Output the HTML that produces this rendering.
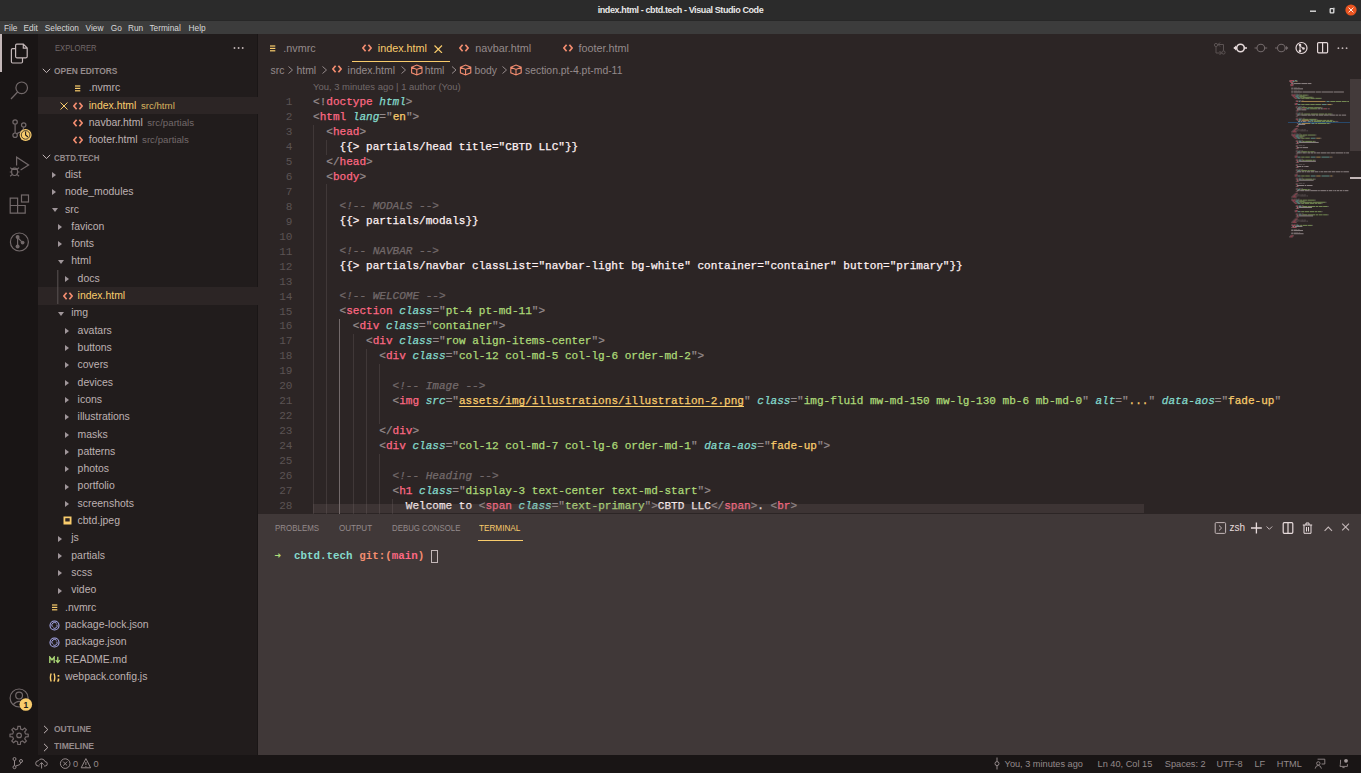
<!DOCTYPE html>
<html><head><meta charset="utf-8"><title>index.html - cbtd.tech - Visual Studio Code</title>
<style>
*{margin:0;padding:0;box-sizing:border-box}
html,body{width:1361px;height:773px;overflow:hidden;background:#2c2525;font-family:"Liberation Sans",sans-serif}
.abs{position:absolute}
#title{position:absolute;left:0;top:0;width:1361px;height:21px;background:#2b2b2b}
#title .t{position:absolute;left:0;width:1361px;top:5px;padding-left:0;text-align:center;color:#e8e8e8;font-weight:bold;font-size:9px;letter-spacing:-0.4px}
#menu{position:absolute;left:0;top:21px;width:1361px;height:13px;background:#3c3c3c}
#menu span{position:absolute;top:1.5px;color:#d8d8d8;font-size:8.3px}
#act{position:absolute;left:0;top:34px;width:38px;height:721px;background:#191515}
#side{position:absolute;left:38px;top:34px;width:220px;height:721px;background:#211c1c}
#editor{position:absolute;left:258px;top:34px;width:1103px;height:480px;background:#2c2525;overflow:hidden}
#panel{position:absolute;left:258px;top:514px;width:1103px;height:241px;background:#403838}
#status{position:absolute;left:0;top:755px;width:1361px;height:18px;background:#191515}
.ln{position:absolute;left:258px;width:34.5px;height:15px;margin-top:0.4px;text-align:right;color:#5b5353;font-family:"Liberation Mono",monospace;font-size:11.06px;line-height:15px}
.cl{position:absolute;left:313px;height:15px;white-space:pre;-webkit-text-stroke:0.25px currentColor;color:#fff1f3;font-family:"Liberation Mono",monospace;font-size:11.06px;line-height:15px}
.ig{position:absolute;width:1px;height:15px;background:#403838}
.ga{background:#72696a}
.p{color:#948a8b}.t{color:#fd6883}.a{color:#85dacc;font-style:italic}.s{color:#f9cc6c}.k{color:#adda78}.c{color:#72696a;font-style:italic}
.u{color:#f9cc6c;text-decoration:underline;text-underline-offset:1.5px}
.row{position:absolute;left:38px;width:220px;height:17.31px;line-height:17.31px;font-size:10.45px;color:#bdb1b2;white-space:nowrap}
.row .tw{position:absolute;top:6px;width:0;height:0;border-top:3px solid transparent;border-bottom:3px solid transparent;border-left:4.5px solid #a0969a}
.row .tw.open{top:7.5px;border-left:3px solid transparent;border-right:3px solid transparent;border-top:4.5px solid #a0969a;border-bottom:0}
.row .lb{position:absolute;top:-0.15px}
.sel{background:#2c2525}
.hdr{font-weight:bold;font-size:9.4px;color:#948a8b}
.tab{position:absolute;top:34px;height:28px;font-size:10.8px;line-height:28px;color:#948a8b;white-space:nowrap}
.bc{position:absolute;top:62.5px;font-size:10.4px;line-height:15px;color:#948a8b;white-space:nowrap}
.ptab{position:absolute;top:522.2px;font-size:9.6px;color:#948a8b;white-space:nowrap}
.term{font-family:"Liberation Mono",monospace;font-weight:bold;font-size:10.85px;line-height:14px;white-space:pre}
.stx{position:absolute;top:759px;font-size:9.2px;color:#948a8b;white-space:nowrap}

</style></head><body>
<div id="title"><div class="t">index.html - cbtd.tech - Visual Studio Code</div>
<svg class="abs" style="left:1308px;top:7px" width="10" height="8"><rect x="2" y="3.5" width="6" height="1.4" fill="#ddd"/></svg>
<svg class="abs" style="left:1327px;top:6px" width="10" height="10"><rect x="3.2" y="2.7" width="3.6" height="4.2" rx="0.6" fill="none" stroke="#e0e0e0" stroke-width="1.3"/><path d="M6.2 2 H7.6 V3.4" stroke="#aaa" stroke-width="0.7" fill="none"/></svg>
<svg class="abs" style="left:1343.8px;top:3.2px" width="14" height="14"><circle cx="7" cy="7" r="5.6" fill="#e95420"/><path d="M4.6 4.6 L9.4 9.4 M9.4 4.6 L4.6 9.4" stroke="#fff" stroke-width="0.9"/></svg>
</div>
<div class="abs" style="left:0;top:20px;width:1361px;height:1px;background:#272727"></div>
<div id="menu">
<span style="left:4px">File</span><span style="left:23.5px">Edit</span><span style="left:44.8px">Selection</span><span style="left:85.6px">View</span><span style="left:110.8px">Go</span><span style="left:128px">Run</span><span style="left:149.4px">Terminal</span><span style="left:188.6px">Help</span>
</div>
<div id="act"></div>
<div id="side"></div>
<div id="editor"></div>
<div id="panel"></div>
<div id="status"></div>
<div class="abs" style="left:257px;top:34px;width:1px;height:721px;background:#1a1616"></div>

<!-- activity bar -->
<div class="abs" style="left:0;top:34px;width:2px;height:38px;background:#c3b7b8"></div>
<svg class="abs" style="left:0;top:34px" width="38" height="721" viewBox="0 34 38 721">
 <g fill="none" stroke="#c3b7b8" stroke-width="1.2">
  <path d="M15.5 48.6 H12.6 Q11.4 48.6 11.4 49.8 V61.8 Q11.4 63 12.6 63 H21.3 Q22.5 63 22.5 61.8 V57.9"/>
  <path d="M16.8 44.2 H23.3 L27.2 48.1 V56.6 Q27.2 57.8 26 57.8 H16.8 Q15.6 57.8 15.6 56.6 V45.4 Q15.6 44.2 16.8 44.2 Z M23.3 44.4 V48.1 H27"/>
 </g>
 <g fill="none" stroke="#72696a" stroke-width="1.2">
  <circle cx="21.7" cy="87.8" r="5.8"/><path d="M17.6 92 L11 99"/>
  <circle cx="15.1" cy="122" r="2.2"/><circle cx="23.7" cy="125" r="2.2"/><circle cx="15.1" cy="135.2" r="2.2"/>
  <path d="M15.1 124.2 V133 M23.7 127.2 Q23.7 131 16.8 133.6"/>
  <path d="M16.6 165.6 V157.2 L28.6 164.9 L20.6 169.9"/>
  <ellipse cx="14.6" cy="171.8" rx="3" ry="3.7"/><path d="M11.8 169.3 H17.4 M10.2 167.6 L11.9 169 M19 167.6 L17.3 169 M9.8 172 H11.6 M17.6 172 H19.4 M10.2 176.2 L12 174.6 M19 176.2 L17.2 174.6"/>
  <path d="M10.2 205.5 H17.6 V213.2 H10.2 Z M17.6 205.5 V198.2 H10.2 V213.2 M17.6 205.5 H25.2 V213.2 H17.6"/>
  <rect x="21.5" y="195" width="7" height="7"/>
  <circle cx="19.4" cy="242" r="9"/>
  <circle cx="19.1" cy="698" r="9"/><circle cx="19.1" cy="695.6" r="3.4"/><path d="M13 704.8 Q19.1 697.8 25.2 704.8"/>
 </g>
 <g fill="#72696a">
  <circle cx="17.6" cy="237" r="2"/><circle cx="17.6" cy="246.4" r="2"/><circle cx="22.6" cy="242.6" r="1.9"/>
 </g>
 <path d="M17.6 237 V246.4 M17.6 237.5 L22.6 242.6" stroke="#72696a" stroke-width="1.2" fill="none"/>
 <circle cx="25.6" cy="134.9" r="6" fill="#f9cc6c"/>
 <path d="M25.6 131.5 V135 L28 137" stroke="#211c1c" stroke-width="1.1" fill="none"/>
 <circle cx="25.6" cy="134.9" r="4.3" stroke="#211c1c" stroke-width="0.8" fill="none"/>
 <circle cx="25.8" cy="704.5" r="6.3" fill="#f9cc6c"/>
 <text x="25.8" y="707.6" text-anchor="middle" font-family="Liberation Sans" font-weight="bold" font-size="8.5" fill="#211c1c">1</text>
 <g transform="translate(19.1 735.4)" fill="none" stroke="#72696a" stroke-width="1.2">
  <path d="M6.42 -1.54 L9.12 -1.22 L9.12 1.22 L6.42 1.54 L5.63 3.45 L7.31 5.58 L5.58 7.31 L3.45 5.63 L1.54 6.42 L1.22 9.12 L-1.22 9.12 L-1.54 6.42 L-3.45 5.63 L-5.58 7.31 L-7.31 5.58 L-5.63 3.45 L-6.42 1.54 L-9.12 1.22 L-9.12 -1.22 L-6.42 -1.54 L-5.63 -3.45 L-7.31 -5.58 L-5.58 -7.31 L-3.45 -5.63 L-1.54 -6.42 L-1.22 -9.12 L1.22 -9.12 L1.54 -6.42 L3.45 -5.63 L5.58 -7.31 L7.31 -5.58 L5.63 -3.45 Z"/>
  <circle cx="0" cy="0" r="2.3"/>
 </g>
</svg>

<!-- sidebar header -->
<div class="abs" style="left:54.6px;top:42.6px;color:#72696a"><span style="display:inline-block;vertical-align:top;white-space:nowrap;font-size:9.2px;transform:scaleX(0.8302);transform-origin:0 0">EXPLORER</span></div>
<svg class="abs" style="left:232px;top:44px" width="14" height="8"><g fill="#c3b7b8"><circle cx="2.5" cy="4" r="0.95"/><circle cx="6.6" cy="4" r="0.95"/><circle cx="10.7" cy="4" r="0.95"/></g></svg>
<div class="row" style="top:62.20px"><svg class="abs" style="left:4px;top:5.5px" width="9" height="6" viewBox="0 0 9 6"><path d="M0.8 0.8 L4.5 4.6 L8.2 0.8" fill="none" stroke="#c3b7b8" stroke-width="1"/></svg><span class="lb hdr" style="left:16px"><span style="display:inline-block;vertical-align:top;white-space:nowrap;font-weight:bold;font-size:9.4px;transform:scaleX(0.8961);transform-origin:0 0">OPEN EDITORS</span></span></div>
<div class="row" style="top:79.51px"><svg class="abs" style="left:37.0px;top:5.4px" width="7" height="7" viewBox="0 0 7 7"><rect x="0" y="0.4" width="5.3" height="1.2" fill="#f9cc6c"/><rect x="0" y="2.8" width="5.3" height="1.2" fill="#f9cc6c"/><rect x="0" y="5.2" width="5.3" height="1.2" fill="#f9cc6c"/></svg><span class="lb" style="left:50.8px">.nvmrc</span></div>
<div class="row sel" style="top:96.82px"><svg class="abs" style="left:21.5px;top:5px" width="8" height="8" viewBox="0 0 8 8"><path d="M0.5 0.5L7.5 7.5M7.5 0.5L0.5 7.5" stroke="#f9cc6c" stroke-width="1"/></svg><svg class="abs" style="left:35.0px;top:5.0px" width="10" height="8" viewBox="0 0 10 8"><path d="M3.6 0.8 L0.9 4 L3.6 7.2 M6.4 0.8 L9.1 4 L6.4 7.2" fill="none" stroke="#f38d70" stroke-width="1.7"/></svg><span class="lb" style="left:50.8px;color:#f9cc6c">index.html&nbsp;<span style="color:#d9b25e;font-size:9.7px;margin-left:1.6px">src/html</span></span></div>
<div class="row" style="top:114.13px"><svg class="abs" style="left:35.0px;top:5.0px" width="10" height="8" viewBox="0 0 10 8"><path d="M3.6 0.8 L0.9 4 L3.6 7.2 M6.4 0.8 L9.1 4 L6.4 7.2" fill="none" stroke="#f38d70" stroke-width="1.7"/></svg><span class="lb" style="left:50.8px;color:#bdb1b2">navbar.html&nbsp;<span style="color:#72696a;font-size:9.7px;margin-left:1.6px">src/partials</span></span></div>
<div class="row" style="top:131.44px"><svg class="abs" style="left:35.0px;top:5.0px" width="10" height="8" viewBox="0 0 10 8"><path d="M3.6 0.8 L0.9 4 L3.6 7.2 M6.4 0.8 L9.1 4 L6.4 7.2" fill="none" stroke="#f38d70" stroke-width="1.7"/></svg><span class="lb" style="left:50.8px;color:#bdb1b2">footer.html&nbsp;<span style="color:#72696a;font-size:9.7px;margin-left:1.6px">src/partials</span></span></div>
<div class="row" style="top:148.75px"><svg class="abs" style="left:4px;top:5.5px" width="9" height="6" viewBox="0 0 9 6"><path d="M0.8 0.8 L4.5 4.6 L8.2 0.8" fill="none" stroke="#c3b7b8" stroke-width="1"/></svg><span class="lb hdr" style="left:16px"><span style="display:inline-block;vertical-align:top;white-space:nowrap;font-weight:bold;font-size:9.4px;transform:scaleX(0.8378);transform-origin:0 0">CBTD.TECH</span></span></div>
<div class="row" style="top:166.06px"><span class="tw" style="left:14.0px"></span><span class="lb" style="left:27.0px">dist</span></div>
<div class="row" style="top:183.37px"><span class="tw" style="left:14.0px"></span><span class="lb" style="left:27.0px">node_modules</span></div>
<div class="row" style="top:200.68px"><span class="tw open" style="left:14.0px"></span><span class="lb" style="left:27.0px">src</span></div>
<div class="row" style="top:217.99px"><span class="tw" style="left:20.3px"></span><span class="lb" style="left:33.3px">favicon</span></div>
<div class="row" style="top:235.30px"><span class="tw" style="left:20.3px"></span><span class="lb" style="left:33.3px">fonts</span></div>
<div class="row" style="top:252.61px"><span class="tw open" style="left:20.3px"></span><span class="lb" style="left:33.3px">html</span></div>
<div class="row" style="top:269.92px"><span class="tw" style="left:26.6px"></span><span class="lb" style="left:39.6px">docs</span></div>
<div class="row sel" style="top:287.23px"><svg class="abs" style="left:24.6px;top:5.0px" width="10" height="8" viewBox="0 0 10 8"><path d="M3.6 0.8 L0.9 4 L3.6 7.2 M6.4 0.8 L9.1 4 L6.4 7.2" fill="none" stroke="#f38d70" stroke-width="1.7"/></svg><span class="lb" style="left:39.6px;color:#f9cc6c">index.html</span></div>
<div class="row" style="top:304.54px"><span class="tw open" style="left:20.3px"></span><span class="lb" style="left:33.3px">img</span></div>
<div class="row" style="top:321.85px"><span class="tw" style="left:26.6px"></span><span class="lb" style="left:39.6px">avatars</span></div>
<div class="row" style="top:339.16px"><span class="tw" style="left:26.6px"></span><span class="lb" style="left:39.6px">buttons</span></div>
<div class="row" style="top:356.47px"><span class="tw" style="left:26.6px"></span><span class="lb" style="left:39.6px">covers</span></div>
<div class="row" style="top:373.78px"><span class="tw" style="left:26.6px"></span><span class="lb" style="left:39.6px">devices</span></div>
<div class="row" style="top:391.09px"><span class="tw" style="left:26.6px"></span><span class="lb" style="left:39.6px">icons</span></div>
<div class="row" style="top:408.40px"><span class="tw" style="left:26.6px"></span><span class="lb" style="left:39.6px">illustrations</span></div>
<div class="row" style="top:425.71px"><span class="tw" style="left:26.6px"></span><span class="lb" style="left:39.6px">masks</span></div>
<div class="row" style="top:443.02px"><span class="tw" style="left:26.6px"></span><span class="lb" style="left:39.6px">patterns</span></div>
<div class="row" style="top:460.33px"><span class="tw" style="left:26.6px"></span><span class="lb" style="left:39.6px">photos</span></div>
<div class="row" style="top:477.64px"><span class="tw" style="left:26.6px"></span><span class="lb" style="left:39.6px">portfolio</span></div>
<div class="row" style="top:494.95px"><span class="tw" style="left:26.6px"></span><span class="lb" style="left:39.6px">screenshots</span></div>
<div class="row" style="top:512.26px"><svg class="abs" style="left:24.6px;top:4.2px" width="9" height="9" viewBox="0 0 9 9"><rect x="0.5" y="0.5" width="8" height="8" fill="#f9cc6c"/><rect x="2.3" y="2.2" width="4.4" height="3.3" fill="#2c2525"/></svg><span class="lb" style="left:39.6px;color:#bdb1b2">cbtd.jpeg</span></div>
<div class="row" style="top:529.57px"><span class="tw" style="left:20.3px"></span><span class="lb" style="left:33.3px">js</span></div>
<div class="row" style="top:546.88px"><span class="tw" style="left:20.3px"></span><span class="lb" style="left:33.3px">partials</span></div>
<div class="row" style="top:564.19px"><span class="tw" style="left:20.3px"></span><span class="lb" style="left:33.3px">scss</span></div>
<div class="row" style="top:581.50px"><span class="tw" style="left:20.3px"></span><span class="lb" style="left:33.3px">video</span></div>
<div class="row" style="top:598.81px"><svg class="abs" style="left:13.5px;top:5.4px" width="7" height="7" viewBox="0 0 7 7"><rect x="0" y="0.4" width="5.3" height="1.2" fill="#f9cc6c"/><rect x="0" y="2.8" width="5.3" height="1.2" fill="#f9cc6c"/><rect x="0" y="5.2" width="5.3" height="1.2" fill="#f9cc6c"/></svg><span class="lb" style="left:27.0px;color:#bdb1b2">.nvmrc</span></div>
<div class="row" style="top:616.12px"><svg class="abs" style="left:11.0px;top:3.7px" width="11" height="11" viewBox="0 0 11 11"><circle cx="5.5" cy="5.5" r="4.5" fill="none" stroke="#a8a9eb" stroke-width="1.1"/><path d="M3.4 6.8 A2.5 2.5 0 0 1 7.6 3.4 M7.8 4.6 A2.5 2.5 0 0 1 4.2 7.9" fill="none" stroke="#a8a9eb" stroke-width="0.95"/></svg><span class="lb" style="left:27.0px;color:#bdb1b2">package-lock.json</span></div>
<div class="row" style="top:633.43px"><svg class="abs" style="left:11.0px;top:3.7px" width="11" height="11" viewBox="0 0 11 11"><circle cx="5.5" cy="5.5" r="4.5" fill="none" stroke="#a8a9eb" stroke-width="1.1"/><path d="M3.4 6.8 A2.5 2.5 0 0 1 7.6 3.4 M7.8 4.6 A2.5 2.5 0 0 1 4.2 7.9" fill="none" stroke="#a8a9eb" stroke-width="0.95"/></svg><span class="lb" style="left:27.0px;color:#bdb1b2">package.json</span></div>
<div class="row" style="top:650.74px"><svg class="abs" style="left:10.5px;top:5.0px" width="12" height="8" viewBox="0 0 12 8"><path d="M0.8 7V1 L3 4 L5.2 1 V7" fill="none" stroke="#adda78" stroke-width="1.3"/><path d="M8.8 0.8V6 M6.8 4.2 L8.8 6.6 L10.8 4.2" fill="none" stroke="#adda78" stroke-width="1.3"/></svg><span class="lb" style="left:27.0px;color:#bdb1b2">README.md</span></div>
<div class="row" style="top:668.05px"><svg class="abs" style="left:10.5px;top:4.5px" width="13" height="9" viewBox="0 0 13 9"><path d="M2.2 0.6 Q0.6 4.5 2.2 8.4 M5 0.6 Q6.6 4.5 5 8.4" fill="none" stroke="#f9cc6c" stroke-width="1.4"/><rect x="8.6" y="2" width="1.7" height="1.7" fill="#f9cc6c"/><path d="M9.5 5.6 V7.2 L8.6 8.6" fill="none" stroke="#f9cc6c" stroke-width="1.6"/></svg><span class="lb" style="left:27.0px;color:#bdb1b2">webpack.config.js</span></div>
<svg class="abs" style="left:57px;top:270px" width="2" height="34"><rect x="0.3" y="0" width="1" height="34" fill="#5b5353"/></svg>
<div class="row" style="top:720.2px"><svg class="abs" style="left:5px;top:5px" width="6" height="9" viewBox="0 0 6 9"><path d="M1 0.8 L4.8 4.5 L1 8.2" fill="none" stroke="#c3b7b8" stroke-width="1"/></svg><span class="lb hdr" style="left:16.4px"><span style="display:inline-block;vertical-align:top;white-space:nowrap;font-weight:bold;font-size:9.4px;transform:scaleX(0.9042);transform-origin:0 0">OUTLINE</span></span></div>
<div class="row" style="top:737.6px"><svg class="abs" style="left:5px;top:5px" width="6" height="9" viewBox="0 0 6 9"><path d="M1 0.8 L4.8 4.5 L1 8.2" fill="none" stroke="#c3b7b8" stroke-width="1"/></svg><span class="lb hdr" style="left:16.4px"><span style="display:inline-block;vertical-align:top;white-space:nowrap;font-weight:bold;font-size:9.4px;transform:scaleX(0.9164);transform-origin:0 0">TIMELINE</span></span></div>

<!-- tabs -->
<div id="tabs">
 <svg class="abs" style="left:269.5px;top:45.2px" width="7" height="7" viewBox="0 0 7 7"><rect x="0" y="0.4" width="5.3" height="1.2" fill="#f9cc6c"/><rect x="0" y="2.8" width="5.3" height="1.2" fill="#f9cc6c"/><rect x="0" y="5.2" width="5.3" height="1.2" fill="#f9cc6c"/></svg>
 <div class="tab" style="left:283.3px">.nvmrc</div>
 <svg class="abs" style="left:361.6px;top:44.4px" width="10" height="8" viewBox="0 0 10 8"><path d="M3.6 0.8 L0.9 4 L3.6 7.2 M6.4 0.8 L9.1 4 L6.4 7.2" fill="none" stroke="#f38d70" stroke-width="1.7"/></svg>
 <div class="tab" style="left:377.8px;color:#f9cc6c">index.html</div>
 <svg class="abs" style="left:434px;top:44.5px" width="8.5" height="8.5" viewBox="0 0 8 8"><path d="M0.5 0.5L7.5 7.5M7.5 0.5L0.5 7.5" stroke="#f9cc6c" stroke-width="1.1"/></svg>
 <div class="abs" style="left:352px;top:60.6px;width:97.5px;height:1.5px;background:#f9cc6c"></div>
 <svg class="abs" style="left:459.4px;top:44.4px" width="10" height="8" viewBox="0 0 10 8"><path d="M3.6 0.8 L0.9 4 L3.6 7.2 M6.4 0.8 L9.1 4 L6.4 7.2" fill="none" stroke="#f38d70" stroke-width="1.7"/></svg>
 <div class="tab" style="left:475.3px">navbar.html</div>
 <svg class="abs" style="left:562.8px;top:44.4px" width="10" height="8" viewBox="0 0 10 8"><path d="M3.6 0.8 L0.9 4 L3.6 7.2 M6.4 0.8 L9.1 4 L6.4 7.2" fill="none" stroke="#f38d70" stroke-width="1.7"/></svg>
 <div class="tab" style="left:578.5px">footer.html</div>
</div>
<!-- editor actions -->
<svg class="abs" style="left:1205px;top:38px" width="150" height="20" viewBox="1205 38 150 20">
 <g fill="none" stroke="#5b5353" stroke-width="1">
  <circle cx="1216" cy="45" r="1.6"/><circle cx="1223.5" cy="52.5" r="1.6"/>
  <path d="M1216 46.8 V53 H1221.5 M1223.5 50.8 V44.5 H1218 M1219.5 51 L1221.5 53 L1219.5 55 M1220 42.5 L1218 44.5 L1220 46.5"/>
 </g>
 <g fill="none" stroke="#e6dadb" stroke-width="1.6"><circle cx="1240.5" cy="48" r="3.8"/><path d="M1236.7 48 H1233.8 M1244.3 48 H1247"/></g>
 <path d="M1236 45.6 L1233.6 48 L1236 50.4" fill="#e6dadb"/>
 <g fill="none" stroke="#72696a" stroke-width="1.1"><circle cx="1260.8" cy="48" r="3.8"/><path d="M1257 48 H1254.5 M1264.6 48 H1267.2"/>
 <circle cx="1281.3" cy="48" r="3.8"/><path d="M1277.5 48 H1275 M1285.1 48 H1287.5"/></g>
 <path d="M1286 45.8 L1288.3 48 L1286 50.2" fill="#72696a"/>
 <g fill="none" stroke="#e6dadb" stroke-width="1.2"><circle cx="1301.5" cy="48" r="5.5"/></g>
 <g fill="#e6dadb"><circle cx="1300" cy="45" r="1.3"/><circle cx="1300" cy="51" r="1.3"/><circle cx="1303.5" cy="48.5" r="1.3"/></g>
 <path d="M1300 45 V51 M1300 46 L1303.5 48.5" stroke="#e6dadb" stroke-width="1" fill="none"/>
 <rect x="1317.6" y="42.6" width="10" height="10.2" rx="1" fill="none" stroke="#e6dadb" stroke-width="1.2"/>
 <path d="M1322.6 42.6 V52.8" stroke="#e6dadb" stroke-width="1.2"/>
 <g fill="#c3b7b8"><circle cx="1338.4" cy="48.2" r="0.9"/><circle cx="1342.5" cy="48.2" r="0.9"/><circle cx="1346.6" cy="48.2" r="0.9"/></g>
</svg>

<!-- breadcrumbs -->
<div class="bc" style="left:270.5px">src</div>
<div class="bc" style="left:296.5px">html</div>
<svg class="abs" style="left:332.0px;top:65.4px" width="10" height="8" viewBox="0 0 10 8"><path d="M3.6 0.8 L0.9 4 L3.6 7.2 M6.4 0.8 L9.1 4 L6.4 7.2" fill="none" stroke="#f38d70" stroke-width="1.7"/></svg>
<div class="bc" style="left:347.6px">index.html</div>
<div class="bc" style="left:424.8px">html</div>
<div class="bc" style="left:474.5px">body</div>
<div class="bc" style="left:525px">section.pt-4.pt-md-11</div>
<svg class="abs" style="left:280px;top:62px" width="400" height="16" viewBox="280 62 400 16">
 <g fill="none" stroke="#948a8b" stroke-width="1"><path d="M288.5 66.5 L292.5 70 L288.5 73.5 M322.5 66.5 L326.5 70 L322.5 73.5 M401.5 66.5 L405.5 70 L401.5 73.5 M452 66.5 L456 70 L452 73.5 M502.5 66.5 L506.5 70 L502.5 73.5"/></g>
 <g fill="none" stroke="#f38d70" stroke-width="1.1">
  <path d="M411.6 67.2 L416.8 65 L422 67.2 V72.8 L416.8 75 L411.6 72.8 Z M411.6 67.2 L416.8 69.4 L422 67.2 M416.8 69.4 V75"/>
  <path d="M460.4 67.2 L465.6 65 L470.8 67.2 V72.8 L465.6 75 L460.4 72.8 Z M460.4 67.2 L465.6 69.4 L470.8 67.2 M465.6 69.4 V75"/>
  <path d="M510.8 67.2 L516 65 L521.2 67.2 V72.8 L516 75 L510.8 72.8 Z M510.8 67.2 L516 69.4 L521.2 67.2 M516 69.4 V75"/>
 </g>
</svg>
<div class="abs" style="left:313px;top:81px;font-size:9.45px;color:#72696a;white-space:nowrap">You, 3 minutes ago | 1 author (You)</div>

<div id="code" class="abs" style="left:258px;top:79px;width:1023px;height:435px;overflow:hidden">
<div class="abs" style="left:-258px;top:-79px;width:1361px;height:600px">
<div class="ln" style="top:94.70px">1</div>
<div class="cl" style="top:94.70px"><span class="p">&lt;</span><span class="p">!</span><span class="t">doctype</span> <span class="a">html</span><span class="p">&gt;</span></div>
<div class="ln" style="top:109.66px">2</div>
<div class="cl" style="top:109.66px"><span class="p">&lt;</span><span class="t">html</span> <span class="a">lang</span><span class="p">=</span><span class="p">"</span><span class="s">en</span><span class="p">"</span><span class="p">&gt;</span></div>
<div class="ln" style="top:124.62px">3</div>
<div class="ig" style="left:313.0px;top:124.62px"></div>
<div class="cl" style="top:124.62px">  <span class="p">&lt;</span><span class="t">head</span><span class="p">&gt;</span></div>
<div class="ln" style="top:139.58px">4</div>
<div class="ig" style="left:313.0px;top:139.58px"></div>
<div class="ig" style="left:326.0px;top:139.58px"></div>
<div class="cl" style="top:139.58px">    {{&gt; partials/head title="CBTD LLC"}}</div>
<div class="ln" style="top:154.54px">5</div>
<div class="ig" style="left:313.0px;top:154.54px"></div>
<div class="cl" style="top:154.54px">  <span class="p">&lt;/</span><span class="t">head</span><span class="p">&gt;</span></div>
<div class="ln" style="top:169.50px">6</div>
<div class="ig" style="left:313.0px;top:169.50px"></div>
<div class="cl" style="top:169.50px">  <span class="p">&lt;</span><span class="t">body</span><span class="p">&gt;</span></div>
<div class="ln" style="top:184.46px">7</div>
<div class="ig" style="left:313.0px;top:184.46px"></div>
<div class="ig" style="left:326.0px;top:184.46px"></div>
<div class="cl" style="top:184.46px"></div>
<div class="ln" style="top:199.42px">8</div>
<div class="ig" style="left:313.0px;top:199.42px"></div>
<div class="ig" style="left:326.0px;top:199.42px"></div>
<div class="cl" style="top:199.42px">    <span class="c">&lt;!-- MODALS --&gt;</span></div>
<div class="ln" style="top:214.38px">9</div>
<div class="ig" style="left:313.0px;top:214.38px"></div>
<div class="ig" style="left:326.0px;top:214.38px"></div>
<div class="cl" style="top:214.38px">    {{&gt; partials/modals}}</div>
<div class="ln" style="top:229.34px">10</div>
<div class="ig" style="left:313.0px;top:229.34px"></div>
<div class="ig" style="left:326.0px;top:229.34px"></div>
<div class="cl" style="top:229.34px"></div>
<div class="ln" style="top:244.30px">11</div>
<div class="ig" style="left:313.0px;top:244.30px"></div>
<div class="ig" style="left:326.0px;top:244.30px"></div>
<div class="cl" style="top:244.30px">    <span class="c">&lt;!-- NAVBAR --&gt;</span></div>
<div class="ln" style="top:259.26px">12</div>
<div class="ig" style="left:313.0px;top:259.26px"></div>
<div class="ig" style="left:326.0px;top:259.26px"></div>
<div class="cl" style="top:259.26px">    {{&gt; partials/navbar classList="navbar-light bg-white" container="container" button="primary"}}</div>
<div class="ln" style="top:274.22px">13</div>
<div class="ig" style="left:313.0px;top:274.22px"></div>
<div class="ig" style="left:326.0px;top:274.22px"></div>
<div class="cl" style="top:274.22px"></div>
<div class="ln" style="top:289.18px">14</div>
<div class="ig" style="left:313.0px;top:289.18px"></div>
<div class="ig" style="left:326.0px;top:289.18px"></div>
<div class="cl" style="top:289.18px">    <span class="c">&lt;!-- WELCOME --&gt;</span></div>
<div class="ln" style="top:304.14px">15</div>
<div class="ig" style="left:313.0px;top:304.14px"></div>
<div class="ig" style="left:326.0px;top:304.14px"></div>
<div class="cl" style="top:304.14px">    <span class="p">&lt;</span><span class="t">section</span> <span class="a">class</span><span class="p">=</span><span class="p">"</span><span class="k">pt-4 pt-md-11</span><span class="p">"</span><span class="p">&gt;</span></div>
<div class="ln" style="top:319.10px">16</div>
<div class="ig" style="left:313.0px;top:319.10px"></div>
<div class="ig" style="left:326.0px;top:319.10px"></div>
<div class="ig ga" style="left:339.0px;top:319.10px"></div>
<div class="cl" style="top:319.10px">      <span class="p">&lt;</span><span class="t">div</span> <span class="a">class</span><span class="p">=</span><span class="p">"</span><span class="k">container</span><span class="p">"</span><span class="p">&gt;</span></div>
<div class="ln" style="top:334.06px">17</div>
<div class="ig" style="left:313.0px;top:334.06px"></div>
<div class="ig" style="left:326.0px;top:334.06px"></div>
<div class="ig ga" style="left:339.0px;top:334.06px"></div>
<div class="ig" style="left:353.0px;top:334.06px"></div>
<div class="cl" style="top:334.06px">        <span class="p">&lt;</span><span class="t">div</span> <span class="a">class</span><span class="p">=</span><span class="p">"</span><span class="k">row align-items-center</span><span class="p">"</span><span class="p">&gt;</span></div>
<div class="ln" style="top:349.02px">18</div>
<div class="ig" style="left:313.0px;top:349.02px"></div>
<div class="ig" style="left:326.0px;top:349.02px"></div>
<div class="ig ga" style="left:339.0px;top:349.02px"></div>
<div class="ig" style="left:353.0px;top:349.02px"></div>
<div class="ig" style="left:366.0px;top:349.02px"></div>
<div class="cl" style="top:349.02px">          <span class="p">&lt;</span><span class="t">div</span> <span class="a">class</span><span class="p">=</span><span class="p">"</span><span class="k">col-12 col-md-5 col-lg-6 order-md-2</span><span class="p">"</span><span class="p">&gt;</span></div>
<div class="ln" style="top:363.98px">19</div>
<div class="ig" style="left:313.0px;top:363.98px"></div>
<div class="ig" style="left:326.0px;top:363.98px"></div>
<div class="ig ga" style="left:339.0px;top:363.98px"></div>
<div class="ig" style="left:353.0px;top:363.98px"></div>
<div class="ig" style="left:366.0px;top:363.98px"></div>
<div class="ig" style="left:379.0px;top:363.98px"></div>
<div class="cl" style="top:363.98px"></div>
<div class="ln" style="top:378.94px">20</div>
<div class="ig" style="left:313.0px;top:378.94px"></div>
<div class="ig" style="left:326.0px;top:378.94px"></div>
<div class="ig ga" style="left:339.0px;top:378.94px"></div>
<div class="ig" style="left:353.0px;top:378.94px"></div>
<div class="ig" style="left:366.0px;top:378.94px"></div>
<div class="ig" style="left:379.0px;top:378.94px"></div>
<div class="cl" style="top:378.94px">            <span class="c">&lt;!-- Image --&gt;</span></div>
<div class="ln" style="top:393.90px">21</div>
<div class="ig" style="left:313.0px;top:393.90px"></div>
<div class="ig" style="left:326.0px;top:393.90px"></div>
<div class="ig ga" style="left:339.0px;top:393.90px"></div>
<div class="ig" style="left:353.0px;top:393.90px"></div>
<div class="ig" style="left:366.0px;top:393.90px"></div>
<div class="ig" style="left:379.0px;top:393.90px"></div>
<div class="cl" style="top:393.90px">            <span class="p">&lt;</span><span class="t">img</span> <span class="a">src</span><span class="p">=</span><span class="p">"</span><span class="u">assets/img/illustrations/illustration-2.png</span><span class="p">"</span> <span class="a">class</span><span class="p">=</span><span class="p">"</span><span class="k">img-fluid mw-md-150 mw-lg-130 mb-6 mb-md-0</span><span class="p">"</span> <span class="a">alt</span><span class="p">=</span><span class="p">"</span><span class="s">...</span><span class="p">"</span> <span class="a">data-aos</span><span class="p">=</span><span class="p">"</span><span class="s">fade-up</span><span class="p">"</span><span class="p">&gt;</span></div>
<div class="ln" style="top:408.86px">22</div>
<div class="ig" style="left:313.0px;top:408.86px"></div>
<div class="ig" style="left:326.0px;top:408.86px"></div>
<div class="ig ga" style="left:339.0px;top:408.86px"></div>
<div class="ig" style="left:353.0px;top:408.86px"></div>
<div class="ig" style="left:366.0px;top:408.86px"></div>
<div class="ig" style="left:379.0px;top:408.86px"></div>
<div class="cl" style="top:408.86px"></div>
<div class="ln" style="top:423.82px">23</div>
<div class="ig" style="left:313.0px;top:423.82px"></div>
<div class="ig" style="left:326.0px;top:423.82px"></div>
<div class="ig ga" style="left:339.0px;top:423.82px"></div>
<div class="ig" style="left:353.0px;top:423.82px"></div>
<div class="ig" style="left:366.0px;top:423.82px"></div>
<div class="cl" style="top:423.82px">          <span class="p">&lt;/</span><span class="t">div</span><span class="p">&gt;</span></div>
<div class="ln" style="top:438.78px">24</div>
<div class="ig" style="left:313.0px;top:438.78px"></div>
<div class="ig" style="left:326.0px;top:438.78px"></div>
<div class="ig ga" style="left:339.0px;top:438.78px"></div>
<div class="ig" style="left:353.0px;top:438.78px"></div>
<div class="ig" style="left:366.0px;top:438.78px"></div>
<div class="cl" style="top:438.78px">          <span class="p">&lt;</span><span class="t">div</span> <span class="a">class</span><span class="p">=</span><span class="p">"</span><span class="k">col-12 col-md-7 col-lg-6 order-md-1</span><span class="p">"</span> <span class="a">data-aos</span><span class="p">=</span><span class="p">"</span><span class="s">fade-up</span><span class="p">"</span><span class="p">&gt;</span></div>
<div class="ln" style="top:453.74px">25</div>
<div class="ig" style="left:313.0px;top:453.74px"></div>
<div class="ig" style="left:326.0px;top:453.74px"></div>
<div class="ig ga" style="left:339.0px;top:453.74px"></div>
<div class="ig" style="left:353.0px;top:453.74px"></div>
<div class="ig" style="left:366.0px;top:453.74px"></div>
<div class="ig" style="left:379.0px;top:453.74px"></div>
<div class="cl" style="top:453.74px"></div>
<div class="ln" style="top:468.70px">26</div>
<div class="ig" style="left:313.0px;top:468.70px"></div>
<div class="ig" style="left:326.0px;top:468.70px"></div>
<div class="ig ga" style="left:339.0px;top:468.70px"></div>
<div class="ig" style="left:353.0px;top:468.70px"></div>
<div class="ig" style="left:366.0px;top:468.70px"></div>
<div class="ig" style="left:379.0px;top:468.70px"></div>
<div class="cl" style="top:468.70px">            <span class="c">&lt;!-- Heading --&gt;</span></div>
<div class="ln" style="top:483.66px">27</div>
<div class="ig" style="left:313.0px;top:483.66px"></div>
<div class="ig" style="left:326.0px;top:483.66px"></div>
<div class="ig ga" style="left:339.0px;top:483.66px"></div>
<div class="ig" style="left:353.0px;top:483.66px"></div>
<div class="ig" style="left:366.0px;top:483.66px"></div>
<div class="ig" style="left:379.0px;top:483.66px"></div>
<div class="cl" style="top:483.66px">            <span class="p">&lt;</span><span class="t">h1</span> <span class="a">class</span><span class="p">=</span><span class="p">"</span><span class="k">display-3 text-center text-md-start</span><span class="p">"</span><span class="p">&gt;</span></div>
<div class="ln" style="top:498.62px">28</div>
<div class="ig" style="left:313.0px;top:498.62px"></div>
<div class="ig" style="left:326.0px;top:498.62px"></div>
<div class="ig ga" style="left:339.0px;top:498.62px"></div>
<div class="ig" style="left:353.0px;top:498.62px"></div>
<div class="ig" style="left:366.0px;top:498.62px"></div>
<div class="ig" style="left:379.0px;top:498.62px"></div>
<div class="ig" style="left:392.0px;top:498.62px"></div>
<div class="cl" style="top:498.62px">              Welcome to <span class="p">&lt;</span><span class="t">span</span> <span class="a">class</span><span class="p">=</span><span class="p">"</span><span class="k">text-primary</span><span class="p">"</span><span class="p">&gt;</span>CBTD LLC<span class="p">&lt;/</span><span class="t">span</span><span class="p">&gt;</span>. <span class="p">&lt;</span><span class="t">br</span><span class="p">&gt;</span></div>
</div>
</div>
<!-- horizontal scrollbar -->
<div class="abs" style="left:313px;top:504.2px;width:831px;height:9px;background:rgba(121,110,110,0.22)"></div>
<!-- minimap -->
<svg class="abs" style="left:1289.3px;top:79.5px" width="61" height="165" viewBox="0 0 61 165"><g opacity="0.62">
<rect x="0.00" y="0.00" width="0.56" height="0.9" fill="#948a8b"/>
<rect x="0.56" y="0.00" width="0.56" height="0.9" fill="#948a8b"/>
<rect x="1.12" y="0.00" width="3.92" height="0.9" fill="#fd6883"/>
<rect x="5.60" y="0.00" width="2.24" height="0.9" fill="#85dacc"/>
<rect x="7.84" y="0.00" width="0.56" height="0.9" fill="#948a8b"/>
<rect x="0.00" y="1.05" width="0.56" height="0.9" fill="#948a8b"/>
<rect x="0.56" y="1.05" width="2.24" height="0.9" fill="#fd6883"/>
<rect x="3.36" y="1.05" width="2.24" height="0.9" fill="#85dacc"/>
<rect x="5.60" y="1.05" width="0.56" height="0.9" fill="#948a8b"/>
<rect x="6.16" y="1.05" width="0.56" height="0.9" fill="#948a8b"/>
<rect x="6.72" y="1.05" width="1.12" height="0.9" fill="#f9cc6c"/>
<rect x="7.84" y="1.05" width="0.56" height="0.9" fill="#948a8b"/>
<rect x="8.40" y="1.05" width="0.56" height="0.9" fill="#948a8b"/>
<rect x="1.12" y="2.10" width="0.56" height="0.9" fill="#948a8b"/>
<rect x="1.68" y="2.10" width="2.24" height="0.9" fill="#fd6883"/>
<rect x="3.92" y="2.10" width="0.56" height="0.9" fill="#948a8b"/>
<rect x="2.24" y="3.15" width="1.68" height="0.9" fill="#d8cccd"/>
<rect x="4.48" y="3.15" width="7.28" height="0.9" fill="#d8cccd"/>
<rect x="12.32" y="3.15" width="6.16" height="0.9" fill="#d8cccd"/>
<rect x="19.04" y="3.15" width="3.36" height="0.9" fill="#d8cccd"/>
<rect x="1.12" y="4.20" width="1.12" height="0.9" fill="#948a8b"/>
<rect x="2.24" y="4.20" width="2.24" height="0.9" fill="#fd6883"/>
<rect x="4.48" y="4.20" width="0.56" height="0.9" fill="#948a8b"/>
<rect x="1.12" y="5.25" width="0.56" height="0.9" fill="#948a8b"/>
<rect x="1.68" y="5.25" width="2.24" height="0.9" fill="#fd6883"/>
<rect x="3.92" y="5.25" width="0.56" height="0.9" fill="#948a8b"/>
<rect x="2.24" y="7.35" width="2.24" height="0.9" fill="#72696a"/>
<rect x="5.04" y="7.35" width="3.36" height="0.9" fill="#72696a"/>
<rect x="8.96" y="7.35" width="1.68" height="0.9" fill="#72696a"/>
<rect x="2.24" y="8.40" width="1.68" height="0.9" fill="#d8cccd"/>
<rect x="4.48" y="8.40" width="9.52" height="0.9" fill="#d8cccd"/>
<rect x="2.24" y="10.50" width="2.24" height="0.9" fill="#72696a"/>
<rect x="5.04" y="10.50" width="3.36" height="0.9" fill="#72696a"/>
<rect x="8.96" y="10.50" width="1.68" height="0.9" fill="#72696a"/>
<rect x="2.24" y="11.55" width="1.68" height="0.9" fill="#d8cccd"/>
<rect x="4.48" y="11.55" width="8.40" height="0.9" fill="#d8cccd"/>
<rect x="13.44" y="11.55" width="12.88" height="0.9" fill="#d8cccd"/>
<rect x="26.88" y="11.55" width="5.04" height="0.9" fill="#d8cccd"/>
<rect x="32.48" y="11.55" width="11.76" height="0.9" fill="#d8cccd"/>
<rect x="44.80" y="11.55" width="10.08" height="0.9" fill="#d8cccd"/>
<rect x="2.24" y="13.65" width="2.24" height="0.9" fill="#72696a"/>
<rect x="5.04" y="13.65" width="3.92" height="0.9" fill="#72696a"/>
<rect x="9.52" y="13.65" width="1.68" height="0.9" fill="#72696a"/>
<rect x="2.24" y="14.70" width="0.56" height="0.9" fill="#948a8b"/>
<rect x="2.80" y="14.70" width="3.92" height="0.9" fill="#fd6883"/>
<rect x="7.28" y="14.70" width="2.80" height="0.9" fill="#85dacc"/>
<rect x="10.08" y="14.70" width="0.56" height="0.9" fill="#948a8b"/>
<rect x="10.64" y="14.70" width="0.56" height="0.9" fill="#948a8b"/>
<rect x="11.20" y="14.70" width="2.24" height="0.9" fill="#adda78"/>
<rect x="14.00" y="14.70" width="4.48" height="0.9" fill="#adda78"/>
<rect x="18.48" y="14.70" width="0.56" height="0.9" fill="#948a8b"/>
<rect x="19.04" y="14.70" width="0.56" height="0.9" fill="#948a8b"/>
<rect x="3.36" y="15.75" width="0.56" height="0.9" fill="#948a8b"/>
<rect x="3.92" y="15.75" width="1.68" height="0.9" fill="#fd6883"/>
<rect x="6.16" y="15.75" width="2.80" height="0.9" fill="#85dacc"/>
<rect x="8.96" y="15.75" width="0.56" height="0.9" fill="#948a8b"/>
<rect x="9.52" y="15.75" width="0.56" height="0.9" fill="#948a8b"/>
<rect x="10.08" y="15.75" width="5.04" height="0.9" fill="#adda78"/>
<rect x="15.12" y="15.75" width="0.56" height="0.9" fill="#948a8b"/>
<rect x="15.68" y="15.75" width="0.56" height="0.9" fill="#948a8b"/>
<rect x="4.48" y="16.80" width="0.56" height="0.9" fill="#948a8b"/>
<rect x="5.04" y="16.80" width="1.68" height="0.9" fill="#fd6883"/>
<rect x="7.28" y="16.80" width="2.80" height="0.9" fill="#85dacc"/>
<rect x="10.08" y="16.80" width="0.56" height="0.9" fill="#948a8b"/>
<rect x="10.64" y="16.80" width="0.56" height="0.9" fill="#948a8b"/>
<rect x="11.20" y="16.80" width="1.68" height="0.9" fill="#adda78"/>
<rect x="13.44" y="16.80" width="10.08" height="0.9" fill="#adda78"/>
<rect x="23.52" y="16.80" width="0.56" height="0.9" fill="#948a8b"/>
<rect x="24.08" y="16.80" width="0.56" height="0.9" fill="#948a8b"/>
<rect x="5.60" y="17.85" width="0.56" height="0.9" fill="#948a8b"/>
<rect x="6.16" y="17.85" width="1.68" height="0.9" fill="#fd6883"/>
<rect x="8.40" y="17.85" width="2.80" height="0.9" fill="#85dacc"/>
<rect x="11.20" y="17.85" width="0.56" height="0.9" fill="#948a8b"/>
<rect x="11.76" y="17.85" width="0.56" height="0.9" fill="#948a8b"/>
<rect x="12.32" y="17.85" width="3.36" height="0.9" fill="#adda78"/>
<rect x="16.24" y="17.85" width="4.48" height="0.9" fill="#adda78"/>
<rect x="21.28" y="17.85" width="4.48" height="0.9" fill="#adda78"/>
<rect x="26.32" y="17.85" width="5.60" height="0.9" fill="#adda78"/>
<rect x="31.92" y="17.85" width="0.56" height="0.9" fill="#948a8b"/>
<rect x="32.48" y="17.85" width="0.56" height="0.9" fill="#948a8b"/>
<rect x="6.72" y="19.95" width="2.24" height="0.9" fill="#72696a"/>
<rect x="9.52" y="19.95" width="2.80" height="0.9" fill="#72696a"/>
<rect x="12.88" y="19.95" width="1.68" height="0.9" fill="#72696a"/>
<rect x="6.72" y="21.00" width="0.56" height="0.9" fill="#948a8b"/>
<rect x="7.28" y="21.00" width="1.68" height="0.9" fill="#fd6883"/>
<rect x="9.52" y="21.00" width="1.68" height="0.9" fill="#85dacc"/>
<rect x="11.20" y="21.00" width="0.56" height="0.9" fill="#948a8b"/>
<rect x="11.76" y="21.00" width="0.56" height="0.9" fill="#948a8b"/>
<rect x="12.32" y="21.00" width="24.08" height="0.9" fill="#f9cc6c"/>
<rect x="36.40" y="21.00" width="0.56" height="0.9" fill="#948a8b"/>
<rect x="37.52" y="21.00" width="2.80" height="0.9" fill="#85dacc"/>
<rect x="40.32" y="21.00" width="0.56" height="0.9" fill="#948a8b"/>
<rect x="40.88" y="21.00" width="0.56" height="0.9" fill="#948a8b"/>
<rect x="41.44" y="21.00" width="5.04" height="0.9" fill="#adda78"/>
<rect x="47.04" y="21.00" width="5.04" height="0.9" fill="#adda78"/>
<rect x="52.64" y="21.00" width="5.04" height="0.9" fill="#adda78"/>
<rect x="58.24" y="21.00" width="1.76" height="0.9" fill="#adda78"/>
<rect x="5.60" y="23.10" width="1.12" height="0.9" fill="#948a8b"/>
<rect x="6.72" y="23.10" width="1.68" height="0.9" fill="#fd6883"/>
<rect x="8.40" y="23.10" width="0.56" height="0.9" fill="#948a8b"/>
<rect x="5.60" y="24.15" width="0.56" height="0.9" fill="#948a8b"/>
<rect x="6.16" y="24.15" width="1.68" height="0.9" fill="#fd6883"/>
<rect x="8.40" y="24.15" width="2.80" height="0.9" fill="#85dacc"/>
<rect x="11.20" y="24.15" width="0.56" height="0.9" fill="#948a8b"/>
<rect x="11.76" y="24.15" width="0.56" height="0.9" fill="#948a8b"/>
<rect x="12.32" y="24.15" width="3.36" height="0.9" fill="#adda78"/>
<rect x="16.24" y="24.15" width="4.48" height="0.9" fill="#adda78"/>
<rect x="21.28" y="24.15" width="4.48" height="0.9" fill="#adda78"/>
<rect x="26.32" y="24.15" width="5.60" height="0.9" fill="#adda78"/>
<rect x="31.92" y="24.15" width="0.56" height="0.9" fill="#948a8b"/>
<rect x="33.04" y="24.15" width="4.48" height="0.9" fill="#85dacc"/>
<rect x="37.52" y="24.15" width="0.56" height="0.9" fill="#948a8b"/>
<rect x="38.08" y="24.15" width="0.56" height="0.9" fill="#948a8b"/>
<rect x="38.64" y="24.15" width="3.92" height="0.9" fill="#f9cc6c"/>
<rect x="42.56" y="24.15" width="0.56" height="0.9" fill="#948a8b"/>
<rect x="43.12" y="24.15" width="0.56" height="0.9" fill="#948a8b"/>
<rect x="6.72" y="26.25" width="2.24" height="0.9" fill="#72696a"/>
<rect x="9.52" y="26.25" width="3.92" height="0.9" fill="#72696a"/>
<rect x="14.00" y="26.25" width="1.68" height="0.9" fill="#72696a"/>
<rect x="6.72" y="27.30" width="0.56" height="0.9" fill="#948a8b"/>
<rect x="7.28" y="27.30" width="1.12" height="0.9" fill="#fd6883"/>
<rect x="8.96" y="27.30" width="2.80" height="0.9" fill="#85dacc"/>
<rect x="11.76" y="27.30" width="0.56" height="0.9" fill="#948a8b"/>
<rect x="12.32" y="27.30" width="0.56" height="0.9" fill="#948a8b"/>
<rect x="12.88" y="27.30" width="5.04" height="0.9" fill="#adda78"/>
<rect x="18.48" y="27.30" width="6.16" height="0.9" fill="#adda78"/>
<rect x="25.20" y="27.30" width="7.28" height="0.9" fill="#adda78"/>
<rect x="32.48" y="27.30" width="0.56" height="0.9" fill="#948a8b"/>
<rect x="33.04" y="27.30" width="0.56" height="0.9" fill="#948a8b"/>
<rect x="7.84" y="28.35" width="3.92" height="0.9" fill="#d8cccd"/>
<rect x="12.32" y="28.35" width="1.12" height="0.9" fill="#d8cccd"/>
<rect x="14.00" y="28.35" width="0.56" height="0.9" fill="#948a8b"/>
<rect x="14.56" y="28.35" width="2.24" height="0.9" fill="#fd6883"/>
<rect x="17.36" y="28.35" width="2.80" height="0.9" fill="#85dacc"/>
<rect x="20.16" y="28.35" width="0.56" height="0.9" fill="#948a8b"/>
<rect x="20.72" y="28.35" width="0.56" height="0.9" fill="#948a8b"/>
<rect x="21.28" y="28.35" width="6.72" height="0.9" fill="#adda78"/>
<rect x="28.00" y="28.35" width="0.56" height="0.9" fill="#948a8b"/>
<rect x="28.56" y="28.35" width="0.56" height="0.9" fill="#948a8b"/>
<rect x="29.12" y="28.35" width="2.24" height="0.9" fill="#d8cccd"/>
<rect x="31.92" y="28.35" width="1.68" height="0.9" fill="#d8cccd"/>
<rect x="33.60" y="28.35" width="1.12" height="0.9" fill="#948a8b"/>
<rect x="34.72" y="28.35" width="2.24" height="0.9" fill="#fd6883"/>
<rect x="36.96" y="28.35" width="0.56" height="0.9" fill="#948a8b"/>
<rect x="37.52" y="28.35" width="0.56" height="0.9" fill="#d8cccd"/>
<rect x="38.64" y="28.35" width="0.56" height="0.9" fill="#948a8b"/>
<rect x="39.20" y="28.35" width="1.12" height="0.9" fill="#fd6883"/>
<rect x="40.32" y="28.35" width="0.56" height="0.9" fill="#948a8b"/>
<rect x="7.84" y="29.40" width="3.92" height="0.9" fill="#d8cccd"/>
<rect x="12.32" y="29.40" width="5.04" height="0.9" fill="#d8cccd"/>
<rect x="6.72" y="30.45" width="1.12" height="0.9" fill="#948a8b"/>
<rect x="7.84" y="30.45" width="1.12" height="0.9" fill="#fd6883"/>
<rect x="8.96" y="30.45" width="0.56" height="0.9" fill="#948a8b"/>
<rect x="6.72" y="32.55" width="2.24" height="0.9" fill="#72696a"/>
<rect x="9.52" y="32.55" width="2.24" height="0.9" fill="#72696a"/>
<rect x="12.32" y="32.55" width="1.68" height="0.9" fill="#72696a"/>
<rect x="6.72" y="33.60" width="0.56" height="0.9" fill="#948a8b"/>
<rect x="7.28" y="33.60" width="0.56" height="0.9" fill="#fd6883"/>
<rect x="8.40" y="33.60" width="2.80" height="0.9" fill="#85dacc"/>
<rect x="11.20" y="33.60" width="0.56" height="0.9" fill="#948a8b"/>
<rect x="11.76" y="33.60" width="0.56" height="0.9" fill="#948a8b"/>
<rect x="12.32" y="33.60" width="2.24" height="0.9" fill="#adda78"/>
<rect x="15.12" y="33.60" width="6.16" height="0.9" fill="#adda78"/>
<rect x="21.84" y="33.60" width="7.28" height="0.9" fill="#adda78"/>
<rect x="29.68" y="33.60" width="5.60" height="0.9" fill="#adda78"/>
<rect x="35.84" y="33.60" width="2.24" height="0.9" fill="#adda78"/>
<rect x="38.64" y="33.60" width="3.92" height="0.9" fill="#adda78"/>
<rect x="42.56" y="33.60" width="0.56" height="0.9" fill="#948a8b"/>
<rect x="43.12" y="33.60" width="0.56" height="0.9" fill="#948a8b"/>
<rect x="7.84" y="34.65" width="2.80" height="0.9" fill="#d8cccd"/>
<rect x="11.20" y="34.65" width="0.56" height="0.9" fill="#d8cccd"/>
<rect x="12.32" y="34.65" width="5.60" height="0.9" fill="#d8cccd"/>
<rect x="18.48" y="34.65" width="3.36" height="0.9" fill="#d8cccd"/>
<rect x="22.40" y="34.65" width="3.92" height="0.9" fill="#d8cccd"/>
<rect x="26.88" y="34.65" width="2.24" height="0.9" fill="#d8cccd"/>
<rect x="29.68" y="34.65" width="4.48" height="0.9" fill="#d8cccd"/>
<rect x="34.72" y="34.65" width="5.04" height="0.9" fill="#d8cccd"/>
<rect x="40.32" y="34.65" width="5.60" height="0.9" fill="#d8cccd"/>
<rect x="46.48" y="34.65" width="2.80" height="0.9" fill="#d8cccd"/>
<rect x="49.84" y="34.65" width="2.24" height="0.9" fill="#d8cccd"/>
<rect x="52.64" y="34.65" width="4.48" height="0.9" fill="#d8cccd"/>
<rect x="6.72" y="35.70" width="1.12" height="0.9" fill="#948a8b"/>
<rect x="7.84" y="35.70" width="0.56" height="0.9" fill="#fd6883"/>
<rect x="8.40" y="35.70" width="0.56" height="0.9" fill="#948a8b"/>
<rect x="6.72" y="37.80" width="2.24" height="0.9" fill="#72696a"/>
<rect x="9.52" y="37.80" width="3.92" height="0.9" fill="#72696a"/>
<rect x="14.00" y="37.80" width="1.68" height="0.9" fill="#72696a"/>
<rect x="6.72" y="38.85" width="0.56" height="0.9" fill="#948a8b"/>
<rect x="7.28" y="38.85" width="1.68" height="0.9" fill="#fd6883"/>
<rect x="9.52" y="38.85" width="2.80" height="0.9" fill="#85dacc"/>
<rect x="12.32" y="38.85" width="0.56" height="0.9" fill="#948a8b"/>
<rect x="12.88" y="38.85" width="0.56" height="0.9" fill="#948a8b"/>
<rect x="13.44" y="38.85" width="6.16" height="0.9" fill="#adda78"/>
<rect x="20.16" y="38.85" width="7.28" height="0.9" fill="#adda78"/>
<rect x="27.44" y="38.85" width="0.56" height="0.9" fill="#948a8b"/>
<rect x="28.00" y="38.85" width="0.56" height="0.9" fill="#948a8b"/>
<rect x="7.84" y="39.90" width="0.56" height="0.9" fill="#948a8b"/>
<rect x="8.40" y="39.90" width="0.56" height="0.9" fill="#fd6883"/>
<rect x="9.52" y="39.90" width="2.24" height="0.9" fill="#85dacc"/>
<rect x="11.76" y="39.90" width="0.56" height="0.9" fill="#948a8b"/>
<rect x="12.32" y="39.90" width="0.56" height="0.9" fill="#948a8b"/>
<rect x="12.88" y="39.90" width="7.28" height="0.9" fill="#f9cc6c"/>
<rect x="20.16" y="39.90" width="0.56" height="0.9" fill="#948a8b"/>
<rect x="21.28" y="39.90" width="2.80" height="0.9" fill="#85dacc"/>
<rect x="24.08" y="39.90" width="0.56" height="0.9" fill="#948a8b"/>
<rect x="24.64" y="39.90" width="0.56" height="0.9" fill="#948a8b"/>
<rect x="25.20" y="39.90" width="1.68" height="0.9" fill="#adda78"/>
<rect x="27.44" y="39.90" width="6.16" height="0.9" fill="#adda78"/>
<rect x="34.16" y="39.90" width="3.36" height="0.9" fill="#adda78"/>
<rect x="38.08" y="39.90" width="2.24" height="0.9" fill="#adda78"/>
<rect x="40.88" y="39.90" width="2.24" height="0.9" fill="#adda78"/>
<rect x="43.12" y="39.90" width="0.56" height="0.9" fill="#948a8b"/>
<rect x="43.68" y="39.90" width="0.56" height="0.9" fill="#948a8b"/>
<rect x="8.96" y="40.95" width="2.24" height="0.9" fill="#d8cccd"/>
<rect x="11.76" y="40.95" width="1.68" height="0.9" fill="#d8cccd"/>
<rect x="14.00" y="40.95" width="2.80" height="0.9" fill="#d8cccd"/>
<rect x="17.36" y="40.95" width="0.56" height="0.9" fill="#948a8b"/>
<rect x="17.92" y="40.95" width="0.56" height="0.9" fill="#fd6883"/>
<rect x="19.04" y="40.95" width="2.80" height="0.9" fill="#85dacc"/>
<rect x="21.84" y="40.95" width="0.56" height="0.9" fill="#948a8b"/>
<rect x="22.40" y="40.95" width="0.56" height="0.9" fill="#948a8b"/>
<rect x="22.96" y="40.95" width="1.12" height="0.9" fill="#adda78"/>
<rect x="24.64" y="40.95" width="7.84" height="0.9" fill="#adda78"/>
<rect x="33.04" y="40.95" width="3.36" height="0.9" fill="#adda78"/>
<rect x="36.96" y="40.95" width="6.16" height="0.9" fill="#adda78"/>
<rect x="43.68" y="40.95" width="2.24" height="0.9" fill="#adda78"/>
<rect x="45.92" y="40.95" width="0.56" height="0.9" fill="#948a8b"/>
<rect x="46.48" y="40.95" width="0.56" height="0.9" fill="#948a8b"/>
<rect x="47.04" y="40.95" width="1.12" height="0.9" fill="#948a8b"/>
<rect x="48.16" y="40.95" width="0.56" height="0.9" fill="#fd6883"/>
<rect x="48.72" y="40.95" width="0.56" height="0.9" fill="#948a8b"/>
<rect x="7.84" y="42.00" width="1.12" height="0.9" fill="#948a8b"/>
<rect x="8.96" y="42.00" width="0.56" height="0.9" fill="#fd6883"/>
<rect x="9.52" y="42.00" width="0.56" height="0.9" fill="#948a8b"/>
<rect x="7.84" y="43.05" width="0.56" height="0.9" fill="#948a8b"/>
<rect x="8.40" y="43.05" width="0.56" height="0.9" fill="#fd6883"/>
<rect x="9.52" y="43.05" width="2.24" height="0.9" fill="#85dacc"/>
<rect x="11.76" y="43.05" width="0.56" height="0.9" fill="#948a8b"/>
<rect x="12.32" y="43.05" width="0.56" height="0.9" fill="#948a8b"/>
<rect x="12.88" y="43.05" width="8.40" height="0.9" fill="#f9cc6c"/>
<rect x="21.28" y="43.05" width="0.56" height="0.9" fill="#948a8b"/>
<rect x="22.40" y="43.05" width="2.80" height="0.9" fill="#85dacc"/>
<rect x="25.20" y="43.05" width="0.56" height="0.9" fill="#948a8b"/>
<rect x="25.76" y="43.05" width="0.56" height="0.9" fill="#948a8b"/>
<rect x="26.32" y="43.05" width="1.68" height="0.9" fill="#adda78"/>
<rect x="28.56" y="43.05" width="8.96" height="0.9" fill="#adda78"/>
<rect x="38.08" y="43.05" width="2.24" height="0.9" fill="#adda78"/>
<rect x="40.32" y="43.05" width="0.56" height="0.9" fill="#948a8b"/>
<rect x="40.88" y="43.05" width="0.56" height="0.9" fill="#948a8b"/>
<rect x="8.96" y="44.10" width="7.28" height="0.9" fill="#d8cccd"/>
<rect x="7.84" y="45.15" width="1.12" height="0.9" fill="#948a8b"/>
<rect x="8.96" y="45.15" width="0.56" height="0.9" fill="#fd6883"/>
<rect x="9.52" y="45.15" width="0.56" height="0.9" fill="#948a8b"/>
<rect x="6.72" y="46.20" width="1.12" height="0.9" fill="#948a8b"/>
<rect x="7.84" y="46.20" width="1.68" height="0.9" fill="#fd6883"/>
<rect x="9.52" y="46.20" width="0.56" height="0.9" fill="#948a8b"/>
<rect x="5.60" y="48.30" width="1.12" height="0.9" fill="#948a8b"/>
<rect x="6.72" y="48.30" width="1.68" height="0.9" fill="#fd6883"/>
<rect x="8.40" y="48.30" width="0.56" height="0.9" fill="#948a8b"/>
<rect x="4.48" y="49.35" width="1.12" height="0.9" fill="#948a8b"/>
<rect x="5.60" y="49.35" width="1.68" height="0.9" fill="#fd6883"/>
<rect x="7.28" y="49.35" width="0.56" height="0.9" fill="#948a8b"/>
<rect x="8.40" y="49.35" width="2.24" height="0.9" fill="#72696a"/>
<rect x="11.20" y="49.35" width="0.56" height="0.9" fill="#72696a"/>
<rect x="12.32" y="49.35" width="2.24" height="0.9" fill="#72696a"/>
<rect x="15.12" y="49.35" width="1.68" height="0.9" fill="#72696a"/>
<rect x="3.36" y="50.40" width="1.12" height="0.9" fill="#948a8b"/>
<rect x="4.48" y="50.40" width="1.68" height="0.9" fill="#fd6883"/>
<rect x="6.16" y="50.40" width="0.56" height="0.9" fill="#948a8b"/>
<rect x="7.28" y="50.40" width="2.24" height="0.9" fill="#72696a"/>
<rect x="10.08" y="50.40" width="0.56" height="0.9" fill="#72696a"/>
<rect x="11.20" y="50.40" width="5.60" height="0.9" fill="#72696a"/>
<rect x="17.36" y="50.40" width="1.68" height="0.9" fill="#72696a"/>
<rect x="2.24" y="51.45" width="1.12" height="0.9" fill="#948a8b"/>
<rect x="3.36" y="51.45" width="3.92" height="0.9" fill="#fd6883"/>
<rect x="7.28" y="51.45" width="0.56" height="0.9" fill="#948a8b"/>
<rect x="2.24" y="53.55" width="2.24" height="0.9" fill="#72696a"/>
<rect x="5.04" y="53.55" width="4.48" height="0.9" fill="#72696a"/>
<rect x="10.08" y="53.55" width="1.68" height="0.9" fill="#72696a"/>
<rect x="2.24" y="54.60" width="0.56" height="0.9" fill="#948a8b"/>
<rect x="2.80" y="54.60" width="3.92" height="0.9" fill="#fd6883"/>
<rect x="7.28" y="54.60" width="2.80" height="0.9" fill="#85dacc"/>
<rect x="10.08" y="54.60" width="0.56" height="0.9" fill="#948a8b"/>
<rect x="10.64" y="54.60" width="0.56" height="0.9" fill="#948a8b"/>
<rect x="11.20" y="54.60" width="2.24" height="0.9" fill="#adda78"/>
<rect x="14.00" y="54.60" width="4.48" height="0.9" fill="#adda78"/>
<rect x="19.04" y="54.60" width="7.28" height="0.9" fill="#adda78"/>
<rect x="26.32" y="54.60" width="0.56" height="0.9" fill="#948a8b"/>
<rect x="26.88" y="54.60" width="0.56" height="0.9" fill="#948a8b"/>
<rect x="3.36" y="55.65" width="0.56" height="0.9" fill="#948a8b"/>
<rect x="3.92" y="55.65" width="1.68" height="0.9" fill="#fd6883"/>
<rect x="6.16" y="55.65" width="2.80" height="0.9" fill="#85dacc"/>
<rect x="8.96" y="55.65" width="0.56" height="0.9" fill="#948a8b"/>
<rect x="9.52" y="55.65" width="0.56" height="0.9" fill="#948a8b"/>
<rect x="10.08" y="55.65" width="5.04" height="0.9" fill="#adda78"/>
<rect x="15.12" y="55.65" width="0.56" height="0.9" fill="#948a8b"/>
<rect x="15.68" y="55.65" width="0.56" height="0.9" fill="#948a8b"/>
<rect x="4.48" y="56.70" width="0.56" height="0.9" fill="#948a8b"/>
<rect x="5.04" y="56.70" width="1.68" height="0.9" fill="#fd6883"/>
<rect x="7.28" y="56.70" width="2.80" height="0.9" fill="#85dacc"/>
<rect x="10.08" y="56.70" width="0.56" height="0.9" fill="#948a8b"/>
<rect x="10.64" y="56.70" width="0.56" height="0.9" fill="#948a8b"/>
<rect x="11.20" y="56.70" width="1.68" height="0.9" fill="#adda78"/>
<rect x="12.88" y="56.70" width="0.56" height="0.9" fill="#948a8b"/>
<rect x="13.44" y="56.70" width="0.56" height="0.9" fill="#948a8b"/>
<rect x="5.60" y="57.75" width="0.56" height="0.9" fill="#948a8b"/>
<rect x="6.16" y="57.75" width="1.68" height="0.9" fill="#fd6883"/>
<rect x="8.40" y="57.75" width="2.80" height="0.9" fill="#85dacc"/>
<rect x="11.20" y="57.75" width="0.56" height="0.9" fill="#948a8b"/>
<rect x="11.76" y="57.75" width="0.56" height="0.9" fill="#948a8b"/>
<rect x="12.32" y="57.75" width="3.36" height="0.9" fill="#adda78"/>
<rect x="16.24" y="57.75" width="4.48" height="0.9" fill="#adda78"/>
<rect x="20.72" y="57.75" width="0.56" height="0.9" fill="#948a8b"/>
<rect x="21.84" y="57.75" width="4.48" height="0.9" fill="#85dacc"/>
<rect x="26.32" y="57.75" width="0.56" height="0.9" fill="#948a8b"/>
<rect x="26.88" y="57.75" width="0.56" height="0.9" fill="#948a8b"/>
<rect x="27.44" y="57.75" width="3.92" height="0.9" fill="#f9cc6c"/>
<rect x="31.36" y="57.75" width="0.56" height="0.9" fill="#948a8b"/>
<rect x="31.92" y="57.75" width="0.56" height="0.9" fill="#948a8b"/>
<rect x="6.72" y="59.85" width="2.24" height="0.9" fill="#72696a"/>
<rect x="9.52" y="59.85" width="2.24" height="0.9" fill="#72696a"/>
<rect x="12.32" y="59.85" width="1.68" height="0.9" fill="#72696a"/>
<rect x="6.72" y="60.90" width="0.56" height="0.9" fill="#948a8b"/>
<rect x="7.28" y="60.90" width="1.68" height="0.9" fill="#fd6883"/>
<rect x="9.52" y="60.90" width="2.80" height="0.9" fill="#85dacc"/>
<rect x="12.32" y="60.90" width="0.56" height="0.9" fill="#948a8b"/>
<rect x="12.88" y="60.90" width="0.56" height="0.9" fill="#948a8b"/>
<rect x="13.44" y="60.90" width="2.24" height="0.9" fill="#adda78"/>
<rect x="16.24" y="60.90" width="6.72" height="0.9" fill="#adda78"/>
<rect x="23.52" y="60.90" width="2.24" height="0.9" fill="#adda78"/>
<rect x="25.76" y="60.90" width="0.56" height="0.9" fill="#948a8b"/>
<rect x="26.32" y="60.90" width="0.56" height="0.9" fill="#948a8b"/>
<rect x="7.84" y="61.95" width="1.68" height="0.9" fill="#d8cccd"/>
<rect x="10.08" y="61.95" width="19.60" height="0.9" fill="#d8cccd"/>
<rect x="6.72" y="63.00" width="1.12" height="0.9" fill="#948a8b"/>
<rect x="7.84" y="63.00" width="1.68" height="0.9" fill="#fd6883"/>
<rect x="9.52" y="63.00" width="0.56" height="0.9" fill="#948a8b"/>
<rect x="6.72" y="65.10" width="2.24" height="0.9" fill="#72696a"/>
<rect x="9.52" y="65.10" width="3.92" height="0.9" fill="#72696a"/>
<rect x="14.00" y="65.10" width="1.68" height="0.9" fill="#72696a"/>
<rect x="6.72" y="66.15" width="0.56" height="0.9" fill="#948a8b"/>
<rect x="7.28" y="66.15" width="1.12" height="0.9" fill="#fd6883"/>
<rect x="8.40" y="66.15" width="0.56" height="0.9" fill="#948a8b"/>
<rect x="7.84" y="67.20" width="2.80" height="0.9" fill="#d8cccd"/>
<rect x="11.20" y="67.20" width="1.68" height="0.9" fill="#d8cccd"/>
<rect x="13.44" y="67.20" width="5.60" height="0.9" fill="#d8cccd"/>
<rect x="6.72" y="68.25" width="1.12" height="0.9" fill="#948a8b"/>
<rect x="7.84" y="68.25" width="1.12" height="0.9" fill="#fd6883"/>
<rect x="8.96" y="68.25" width="0.56" height="0.9" fill="#948a8b"/>
<rect x="6.72" y="70.35" width="2.24" height="0.9" fill="#72696a"/>
<rect x="9.52" y="70.35" width="2.24" height="0.9" fill="#72696a"/>
<rect x="12.32" y="70.35" width="1.68" height="0.9" fill="#72696a"/>
<rect x="6.72" y="71.40" width="0.56" height="0.9" fill="#948a8b"/>
<rect x="7.28" y="71.40" width="0.56" height="0.9" fill="#fd6883"/>
<rect x="8.40" y="71.40" width="2.80" height="0.9" fill="#85dacc"/>
<rect x="11.20" y="71.40" width="0.56" height="0.9" fill="#948a8b"/>
<rect x="11.76" y="71.40" width="0.56" height="0.9" fill="#948a8b"/>
<rect x="12.32" y="71.40" width="5.60" height="0.9" fill="#adda78"/>
<rect x="18.48" y="71.40" width="2.24" height="0.9" fill="#adda78"/>
<rect x="21.28" y="71.40" width="3.92" height="0.9" fill="#adda78"/>
<rect x="25.20" y="71.40" width="0.56" height="0.9" fill="#948a8b"/>
<rect x="25.76" y="71.40" width="0.56" height="0.9" fill="#948a8b"/>
<rect x="7.84" y="72.45" width="3.92" height="0.9" fill="#d8cccd"/>
<rect x="12.32" y="72.45" width="1.12" height="0.9" fill="#d8cccd"/>
<rect x="14.00" y="72.45" width="2.80" height="0.9" fill="#d8cccd"/>
<rect x="17.36" y="72.45" width="1.12" height="0.9" fill="#d8cccd"/>
<rect x="19.04" y="72.45" width="2.24" height="0.9" fill="#d8cccd"/>
<rect x="21.84" y="72.45" width="2.24" height="0.9" fill="#d8cccd"/>
<rect x="24.64" y="72.45" width="2.24" height="0.9" fill="#d8cccd"/>
<rect x="27.44" y="72.45" width="3.92" height="0.9" fill="#d8cccd"/>
<rect x="31.92" y="72.45" width="5.60" height="0.9" fill="#d8cccd"/>
<rect x="38.08" y="72.45" width="2.80" height="0.9" fill="#d8cccd"/>
<rect x="41.44" y="72.45" width="4.48" height="0.9" fill="#d8cccd"/>
<rect x="46.48" y="72.45" width="7.84" height="0.9" fill="#d8cccd"/>
<rect x="54.88" y="72.45" width="1.68" height="0.9" fill="#d8cccd"/>
<rect x="57.12" y="72.45" width="2.88" height="0.9" fill="#d8cccd"/>
<rect x="6.72" y="73.50" width="1.12" height="0.9" fill="#948a8b"/>
<rect x="7.84" y="73.50" width="0.56" height="0.9" fill="#fd6883"/>
<rect x="8.40" y="73.50" width="0.56" height="0.9" fill="#948a8b"/>
<rect x="5.60" y="75.60" width="1.12" height="0.9" fill="#948a8b"/>
<rect x="6.72" y="75.60" width="1.68" height="0.9" fill="#fd6883"/>
<rect x="8.40" y="75.60" width="0.56" height="0.9" fill="#948a8b"/>
<rect x="5.60" y="76.65" width="0.56" height="0.9" fill="#948a8b"/>
<rect x="6.16" y="76.65" width="1.68" height="0.9" fill="#fd6883"/>
<rect x="8.40" y="76.65" width="2.80" height="0.9" fill="#85dacc"/>
<rect x="11.20" y="76.65" width="0.56" height="0.9" fill="#948a8b"/>
<rect x="11.76" y="76.65" width="0.56" height="0.9" fill="#948a8b"/>
<rect x="12.32" y="76.65" width="3.36" height="0.9" fill="#adda78"/>
<rect x="16.24" y="76.65" width="4.48" height="0.9" fill="#adda78"/>
<rect x="20.72" y="76.65" width="0.56" height="0.9" fill="#948a8b"/>
<rect x="21.84" y="76.65" width="4.48" height="0.9" fill="#85dacc"/>
<rect x="26.32" y="76.65" width="0.56" height="0.9" fill="#948a8b"/>
<rect x="26.88" y="76.65" width="0.56" height="0.9" fill="#948a8b"/>
<rect x="27.44" y="76.65" width="3.92" height="0.9" fill="#f9cc6c"/>
<rect x="31.36" y="76.65" width="0.56" height="0.9" fill="#948a8b"/>
<rect x="32.48" y="76.65" width="7.84" height="0.9" fill="#85dacc"/>
<rect x="40.32" y="76.65" width="0.56" height="0.9" fill="#948a8b"/>
<rect x="40.88" y="76.65" width="0.56" height="0.9" fill="#948a8b"/>
<rect x="41.44" y="76.65" width="1.12" height="0.9" fill="#f9cc6c"/>
<rect x="42.56" y="76.65" width="0.56" height="0.9" fill="#948a8b"/>
<rect x="43.12" y="76.65" width="0.56" height="0.9" fill="#948a8b"/>
<rect x="6.72" y="78.75" width="2.24" height="0.9" fill="#72696a"/>
<rect x="9.52" y="78.75" width="2.24" height="0.9" fill="#72696a"/>
<rect x="12.32" y="78.75" width="1.68" height="0.9" fill="#72696a"/>
<rect x="6.72" y="79.80" width="0.56" height="0.9" fill="#948a8b"/>
<rect x="7.28" y="79.80" width="1.68" height="0.9" fill="#fd6883"/>
<rect x="9.52" y="79.80" width="2.80" height="0.9" fill="#85dacc"/>
<rect x="12.32" y="79.80" width="0.56" height="0.9" fill="#948a8b"/>
<rect x="12.88" y="79.80" width="0.56" height="0.9" fill="#948a8b"/>
<rect x="13.44" y="79.80" width="2.24" height="0.9" fill="#adda78"/>
<rect x="16.24" y="79.80" width="6.72" height="0.9" fill="#adda78"/>
<rect x="23.52" y="79.80" width="2.24" height="0.9" fill="#adda78"/>
<rect x="25.76" y="79.80" width="0.56" height="0.9" fill="#948a8b"/>
<rect x="26.32" y="79.80" width="0.56" height="0.9" fill="#948a8b"/>
<rect x="7.84" y="80.85" width="1.68" height="0.9" fill="#d8cccd"/>
<rect x="10.08" y="80.85" width="16.80" height="0.9" fill="#d8cccd"/>
<rect x="6.72" y="81.90" width="1.12" height="0.9" fill="#948a8b"/>
<rect x="7.84" y="81.90" width="1.68" height="0.9" fill="#fd6883"/>
<rect x="9.52" y="81.90" width="0.56" height="0.9" fill="#948a8b"/>
<rect x="6.72" y="84.00" width="2.24" height="0.9" fill="#72696a"/>
<rect x="9.52" y="84.00" width="3.92" height="0.9" fill="#72696a"/>
<rect x="14.00" y="84.00" width="1.68" height="0.9" fill="#72696a"/>
<rect x="6.72" y="85.05" width="0.56" height="0.9" fill="#948a8b"/>
<rect x="7.28" y="85.05" width="1.12" height="0.9" fill="#fd6883"/>
<rect x="8.40" y="85.05" width="0.56" height="0.9" fill="#948a8b"/>
<rect x="7.84" y="86.10" width="4.48" height="0.9" fill="#d8cccd"/>
<rect x="12.88" y="86.10" width="1.12" height="0.9" fill="#d8cccd"/>
<rect x="14.56" y="86.10" width="1.12" height="0.9" fill="#d8cccd"/>
<rect x="16.24" y="86.10" width="3.36" height="0.9" fill="#d8cccd"/>
<rect x="6.72" y="87.15" width="1.12" height="0.9" fill="#948a8b"/>
<rect x="7.84" y="87.15" width="1.12" height="0.9" fill="#fd6883"/>
<rect x="8.96" y="87.15" width="0.56" height="0.9" fill="#948a8b"/>
<rect x="6.72" y="89.25" width="2.24" height="0.9" fill="#72696a"/>
<rect x="9.52" y="89.25" width="2.24" height="0.9" fill="#72696a"/>
<rect x="12.32" y="89.25" width="1.68" height="0.9" fill="#72696a"/>
<rect x="6.72" y="90.30" width="0.56" height="0.9" fill="#948a8b"/>
<rect x="7.28" y="90.30" width="0.56" height="0.9" fill="#fd6883"/>
<rect x="8.40" y="90.30" width="2.80" height="0.9" fill="#85dacc"/>
<rect x="11.20" y="90.30" width="0.56" height="0.9" fill="#948a8b"/>
<rect x="11.76" y="90.30" width="0.56" height="0.9" fill="#948a8b"/>
<rect x="12.32" y="90.30" width="5.60" height="0.9" fill="#adda78"/>
<rect x="18.48" y="90.30" width="2.24" height="0.9" fill="#adda78"/>
<rect x="21.28" y="90.30" width="3.92" height="0.9" fill="#adda78"/>
<rect x="25.20" y="90.30" width="0.56" height="0.9" fill="#948a8b"/>
<rect x="25.76" y="90.30" width="0.56" height="0.9" fill="#948a8b"/>
<rect x="7.84" y="91.35" width="4.48" height="0.9" fill="#d8cccd"/>
<rect x="12.88" y="91.35" width="2.24" height="0.9" fill="#d8cccd"/>
<rect x="15.68" y="91.35" width="1.68" height="0.9" fill="#d8cccd"/>
<rect x="17.92" y="91.35" width="3.36" height="0.9" fill="#d8cccd"/>
<rect x="21.84" y="91.35" width="3.36" height="0.9" fill="#d8cccd"/>
<rect x="25.76" y="91.35" width="3.36" height="0.9" fill="#d8cccd"/>
<rect x="29.68" y="91.35" width="1.12" height="0.9" fill="#d8cccd"/>
<rect x="31.36" y="91.35" width="2.80" height="0.9" fill="#d8cccd"/>
<rect x="34.72" y="91.35" width="3.92" height="0.9" fill="#d8cccd"/>
<rect x="39.20" y="91.35" width="2.80" height="0.9" fill="#d8cccd"/>
<rect x="42.56" y="91.35" width="3.92" height="0.9" fill="#d8cccd"/>
<rect x="47.04" y="91.35" width="4.48" height="0.9" fill="#d8cccd"/>
<rect x="52.08" y="91.35" width="1.68" height="0.9" fill="#d8cccd"/>
<rect x="54.32" y="91.35" width="5.60" height="0.9" fill="#d8cccd"/>
<rect x="6.72" y="92.40" width="1.12" height="0.9" fill="#948a8b"/>
<rect x="7.84" y="92.40" width="0.56" height="0.9" fill="#fd6883"/>
<rect x="8.40" y="92.40" width="0.56" height="0.9" fill="#948a8b"/>
<rect x="5.60" y="94.50" width="1.12" height="0.9" fill="#948a8b"/>
<rect x="6.72" y="94.50" width="1.68" height="0.9" fill="#fd6883"/>
<rect x="8.40" y="94.50" width="0.56" height="0.9" fill="#948a8b"/>
<rect x="5.60" y="95.55" width="0.56" height="0.9" fill="#948a8b"/>
<rect x="6.16" y="95.55" width="1.68" height="0.9" fill="#fd6883"/>
<rect x="8.40" y="95.55" width="2.80" height="0.9" fill="#85dacc"/>
<rect x="11.20" y="95.55" width="0.56" height="0.9" fill="#948a8b"/>
<rect x="11.76" y="95.55" width="0.56" height="0.9" fill="#948a8b"/>
<rect x="12.32" y="95.55" width="3.36" height="0.9" fill="#adda78"/>
<rect x="16.24" y="95.55" width="4.48" height="0.9" fill="#adda78"/>
<rect x="20.72" y="95.55" width="0.56" height="0.9" fill="#948a8b"/>
<rect x="21.84" y="95.55" width="4.48" height="0.9" fill="#85dacc"/>
<rect x="26.32" y="95.55" width="0.56" height="0.9" fill="#948a8b"/>
<rect x="26.88" y="95.55" width="0.56" height="0.9" fill="#948a8b"/>
<rect x="27.44" y="95.55" width="3.92" height="0.9" fill="#f9cc6c"/>
<rect x="31.36" y="95.55" width="0.56" height="0.9" fill="#948a8b"/>
<rect x="32.48" y="95.55" width="7.84" height="0.9" fill="#85dacc"/>
<rect x="40.32" y="95.55" width="0.56" height="0.9" fill="#948a8b"/>
<rect x="40.88" y="95.55" width="0.56" height="0.9" fill="#948a8b"/>
<rect x="41.44" y="95.55" width="1.68" height="0.9" fill="#f9cc6c"/>
<rect x="43.12" y="95.55" width="0.56" height="0.9" fill="#948a8b"/>
<rect x="43.68" y="95.55" width="0.56" height="0.9" fill="#948a8b"/>
<rect x="6.72" y="97.65" width="2.24" height="0.9" fill="#72696a"/>
<rect x="9.52" y="97.65" width="2.24" height="0.9" fill="#72696a"/>
<rect x="12.32" y="97.65" width="1.68" height="0.9" fill="#72696a"/>
<rect x="6.72" y="98.70" width="0.56" height="0.9" fill="#948a8b"/>
<rect x="7.28" y="98.70" width="1.68" height="0.9" fill="#fd6883"/>
<rect x="9.52" y="98.70" width="2.80" height="0.9" fill="#85dacc"/>
<rect x="12.32" y="98.70" width="0.56" height="0.9" fill="#948a8b"/>
<rect x="12.88" y="98.70" width="0.56" height="0.9" fill="#948a8b"/>
<rect x="13.44" y="98.70" width="2.24" height="0.9" fill="#adda78"/>
<rect x="16.24" y="98.70" width="6.72" height="0.9" fill="#adda78"/>
<rect x="23.52" y="98.70" width="2.24" height="0.9" fill="#adda78"/>
<rect x="25.76" y="98.70" width="0.56" height="0.9" fill="#948a8b"/>
<rect x="26.32" y="98.70" width="0.56" height="0.9" fill="#948a8b"/>
<rect x="7.84" y="99.75" width="1.68" height="0.9" fill="#d8cccd"/>
<rect x="10.08" y="99.75" width="14.56" height="0.9" fill="#d8cccd"/>
<rect x="6.72" y="100.80" width="1.12" height="0.9" fill="#948a8b"/>
<rect x="7.84" y="100.80" width="1.68" height="0.9" fill="#fd6883"/>
<rect x="9.52" y="100.80" width="0.56" height="0.9" fill="#948a8b"/>
<rect x="6.72" y="102.90" width="2.24" height="0.9" fill="#72696a"/>
<rect x="9.52" y="102.90" width="3.92" height="0.9" fill="#72696a"/>
<rect x="14.00" y="102.90" width="1.68" height="0.9" fill="#72696a"/>
<rect x="6.72" y="103.95" width="0.56" height="0.9" fill="#948a8b"/>
<rect x="7.28" y="103.95" width="1.12" height="0.9" fill="#fd6883"/>
<rect x="8.40" y="103.95" width="0.56" height="0.9" fill="#948a8b"/>
<rect x="7.84" y="105.00" width="7.28" height="0.9" fill="#d8cccd"/>
<rect x="15.68" y="105.00" width="1.68" height="0.9" fill="#d8cccd"/>
<rect x="17.92" y="105.00" width="5.60" height="0.9" fill="#d8cccd"/>
<rect x="6.72" y="106.05" width="1.12" height="0.9" fill="#948a8b"/>
<rect x="7.84" y="106.05" width="1.12" height="0.9" fill="#fd6883"/>
<rect x="8.96" y="106.05" width="0.56" height="0.9" fill="#948a8b"/>
<rect x="6.72" y="108.15" width="2.24" height="0.9" fill="#72696a"/>
<rect x="9.52" y="108.15" width="2.24" height="0.9" fill="#72696a"/>
<rect x="12.32" y="108.15" width="1.68" height="0.9" fill="#72696a"/>
<rect x="6.72" y="109.20" width="0.56" height="0.9" fill="#948a8b"/>
<rect x="7.28" y="109.20" width="0.56" height="0.9" fill="#fd6883"/>
<rect x="8.40" y="109.20" width="2.80" height="0.9" fill="#85dacc"/>
<rect x="11.20" y="109.20" width="0.56" height="0.9" fill="#948a8b"/>
<rect x="11.76" y="109.20" width="0.56" height="0.9" fill="#948a8b"/>
<rect x="12.32" y="109.20" width="5.60" height="0.9" fill="#adda78"/>
<rect x="18.48" y="109.20" width="2.24" height="0.9" fill="#adda78"/>
<rect x="20.72" y="109.20" width="0.56" height="0.9" fill="#948a8b"/>
<rect x="21.28" y="109.20" width="0.56" height="0.9" fill="#948a8b"/>
<rect x="7.84" y="110.25" width="2.80" height="0.9" fill="#d8cccd"/>
<rect x="11.20" y="110.25" width="3.92" height="0.9" fill="#d8cccd"/>
<rect x="15.68" y="110.25" width="5.04" height="0.9" fill="#d8cccd"/>
<rect x="21.28" y="110.25" width="7.28" height="0.9" fill="#d8cccd"/>
<rect x="29.12" y="110.25" width="1.68" height="0.9" fill="#d8cccd"/>
<rect x="31.36" y="110.25" width="5.60" height="0.9" fill="#d8cccd"/>
<rect x="37.52" y="110.25" width="1.68" height="0.9" fill="#d8cccd"/>
<rect x="39.76" y="110.25" width="3.36" height="0.9" fill="#d8cccd"/>
<rect x="43.68" y="110.25" width="1.12" height="0.9" fill="#d8cccd"/>
<rect x="45.36" y="110.25" width="1.68" height="0.9" fill="#d8cccd"/>
<rect x="47.60" y="110.25" width="2.80" height="0.9" fill="#d8cccd"/>
<rect x="50.96" y="110.25" width="2.24" height="0.9" fill="#d8cccd"/>
<rect x="53.76" y="110.25" width="1.12" height="0.9" fill="#d8cccd"/>
<rect x="55.44" y="110.25" width="3.92" height="0.9" fill="#d8cccd"/>
<rect x="59.92" y="110.25" width="0.08" height="0.9" fill="#d8cccd"/>
<rect x="6.72" y="111.30" width="1.12" height="0.9" fill="#948a8b"/>
<rect x="7.84" y="111.30" width="0.56" height="0.9" fill="#fd6883"/>
<rect x="8.40" y="111.30" width="0.56" height="0.9" fill="#948a8b"/>
<rect x="5.60" y="113.40" width="1.12" height="0.9" fill="#948a8b"/>
<rect x="6.72" y="113.40" width="1.68" height="0.9" fill="#fd6883"/>
<rect x="8.40" y="113.40" width="0.56" height="0.9" fill="#948a8b"/>
<rect x="4.48" y="114.45" width="1.12" height="0.9" fill="#948a8b"/>
<rect x="5.60" y="114.45" width="1.68" height="0.9" fill="#fd6883"/>
<rect x="7.28" y="114.45" width="0.56" height="0.9" fill="#948a8b"/>
<rect x="8.40" y="114.45" width="2.24" height="0.9" fill="#72696a"/>
<rect x="11.20" y="114.45" width="0.56" height="0.9" fill="#72696a"/>
<rect x="12.32" y="114.45" width="2.24" height="0.9" fill="#72696a"/>
<rect x="15.12" y="114.45" width="1.68" height="0.9" fill="#72696a"/>
<rect x="3.36" y="115.50" width="1.12" height="0.9" fill="#948a8b"/>
<rect x="4.48" y="115.50" width="1.68" height="0.9" fill="#fd6883"/>
<rect x="6.16" y="115.50" width="0.56" height="0.9" fill="#948a8b"/>
<rect x="7.28" y="115.50" width="2.24" height="0.9" fill="#72696a"/>
<rect x="10.08" y="115.50" width="0.56" height="0.9" fill="#72696a"/>
<rect x="11.20" y="115.50" width="5.60" height="0.9" fill="#72696a"/>
<rect x="17.36" y="115.50" width="1.68" height="0.9" fill="#72696a"/>
<rect x="2.24" y="116.55" width="1.12" height="0.9" fill="#948a8b"/>
<rect x="3.36" y="116.55" width="3.92" height="0.9" fill="#fd6883"/>
<rect x="7.28" y="116.55" width="0.56" height="0.9" fill="#948a8b"/>
<rect x="2.24" y="118.65" width="2.24" height="0.9" fill="#72696a"/>
<rect x="5.04" y="118.65" width="3.36" height="0.9" fill="#72696a"/>
<rect x="8.96" y="118.65" width="1.68" height="0.9" fill="#72696a"/>
<rect x="2.24" y="119.70" width="0.56" height="0.9" fill="#948a8b"/>
<rect x="2.80" y="119.70" width="3.92" height="0.9" fill="#fd6883"/>
<rect x="7.28" y="119.70" width="2.80" height="0.9" fill="#85dacc"/>
<rect x="10.08" y="119.70" width="0.56" height="0.9" fill="#948a8b"/>
<rect x="10.64" y="119.70" width="0.56" height="0.9" fill="#948a8b"/>
<rect x="11.20" y="119.70" width="2.24" height="0.9" fill="#adda78"/>
<rect x="14.00" y="119.70" width="3.92" height="0.9" fill="#adda78"/>
<rect x="18.48" y="119.70" width="7.28" height="0.9" fill="#adda78"/>
<rect x="25.76" y="119.70" width="0.56" height="0.9" fill="#948a8b"/>
<rect x="26.32" y="119.70" width="0.56" height="0.9" fill="#948a8b"/>
<rect x="3.36" y="120.75" width="0.56" height="0.9" fill="#948a8b"/>
<rect x="3.92" y="120.75" width="1.68" height="0.9" fill="#fd6883"/>
<rect x="6.16" y="120.75" width="2.80" height="0.9" fill="#85dacc"/>
<rect x="8.96" y="120.75" width="0.56" height="0.9" fill="#948a8b"/>
<rect x="9.52" y="120.75" width="0.56" height="0.9" fill="#948a8b"/>
<rect x="10.08" y="120.75" width="5.04" height="0.9" fill="#adda78"/>
<rect x="15.12" y="120.75" width="0.56" height="0.9" fill="#948a8b"/>
<rect x="15.68" y="120.75" width="0.56" height="0.9" fill="#948a8b"/>
<rect x="4.48" y="121.80" width="0.56" height="0.9" fill="#948a8b"/>
<rect x="5.04" y="121.80" width="1.68" height="0.9" fill="#fd6883"/>
<rect x="7.28" y="121.80" width="2.80" height="0.9" fill="#85dacc"/>
<rect x="10.08" y="121.80" width="0.56" height="0.9" fill="#948a8b"/>
<rect x="10.64" y="121.80" width="0.56" height="0.9" fill="#948a8b"/>
<rect x="11.20" y="121.80" width="1.68" height="0.9" fill="#adda78"/>
<rect x="13.44" y="121.80" width="10.08" height="0.9" fill="#adda78"/>
<rect x="24.08" y="121.80" width="12.32" height="0.9" fill="#adda78"/>
<rect x="36.40" y="121.80" width="0.56" height="0.9" fill="#948a8b"/>
<rect x="36.96" y="121.80" width="0.56" height="0.9" fill="#948a8b"/>
<rect x="5.60" y="122.85" width="0.56" height="0.9" fill="#948a8b"/>
<rect x="6.16" y="122.85" width="1.68" height="0.9" fill="#fd6883"/>
<rect x="8.40" y="122.85" width="2.80" height="0.9" fill="#85dacc"/>
<rect x="11.20" y="122.85" width="0.56" height="0.9" fill="#948a8b"/>
<rect x="11.76" y="122.85" width="0.56" height="0.9" fill="#948a8b"/>
<rect x="12.32" y="122.85" width="2.80" height="0.9" fill="#adda78"/>
<rect x="15.68" y="122.85" width="4.48" height="0.9" fill="#adda78"/>
<rect x="20.72" y="122.85" width="4.48" height="0.9" fill="#adda78"/>
<rect x="25.76" y="122.85" width="2.24" height="0.9" fill="#adda78"/>
<rect x="28.56" y="122.85" width="3.92" height="0.9" fill="#adda78"/>
<rect x="32.48" y="122.85" width="0.56" height="0.9" fill="#948a8b"/>
<rect x="33.04" y="122.85" width="0.56" height="0.9" fill="#948a8b"/>
<rect x="6.72" y="124.95" width="2.24" height="0.9" fill="#72696a"/>
<rect x="9.52" y="124.95" width="2.80" height="0.9" fill="#72696a"/>
<rect x="12.88" y="124.95" width="1.68" height="0.9" fill="#72696a"/>
<rect x="6.72" y="126.00" width="0.56" height="0.9" fill="#948a8b"/>
<rect x="7.28" y="126.00" width="1.68" height="0.9" fill="#fd6883"/>
<rect x="9.52" y="126.00" width="2.80" height="0.9" fill="#85dacc"/>
<rect x="12.32" y="126.00" width="0.56" height="0.9" fill="#948a8b"/>
<rect x="12.88" y="126.00" width="0.56" height="0.9" fill="#948a8b"/>
<rect x="13.44" y="126.00" width="5.04" height="0.9" fill="#adda78"/>
<rect x="19.04" y="126.00" width="7.28" height="0.9" fill="#adda78"/>
<rect x="26.88" y="126.00" width="2.24" height="0.9" fill="#adda78"/>
<rect x="29.68" y="126.00" width="3.92" height="0.9" fill="#adda78"/>
<rect x="34.16" y="126.00" width="4.48" height="0.9" fill="#adda78"/>
<rect x="38.64" y="126.00" width="0.56" height="0.9" fill="#948a8b"/>
<rect x="39.20" y="126.00" width="0.56" height="0.9" fill="#948a8b"/>
<rect x="7.84" y="127.05" width="1.68" height="0.9" fill="#d8cccd"/>
<rect x="10.08" y="127.05" width="12.88" height="0.9" fill="#d8cccd"/>
<rect x="6.72" y="128.10" width="1.12" height="0.9" fill="#948a8b"/>
<rect x="7.84" y="128.10" width="1.68" height="0.9" fill="#fd6883"/>
<rect x="9.52" y="128.10" width="0.56" height="0.9" fill="#948a8b"/>
<rect x="5.60" y="130.20" width="1.12" height="0.9" fill="#948a8b"/>
<rect x="6.72" y="130.20" width="1.68" height="0.9" fill="#fd6883"/>
<rect x="8.40" y="130.20" width="0.56" height="0.9" fill="#948a8b"/>
<rect x="5.60" y="131.25" width="0.56" height="0.9" fill="#948a8b"/>
<rect x="6.16" y="131.25" width="1.68" height="0.9" fill="#fd6883"/>
<rect x="8.40" y="131.25" width="2.80" height="0.9" fill="#85dacc"/>
<rect x="11.20" y="131.25" width="0.56" height="0.9" fill="#948a8b"/>
<rect x="11.76" y="131.25" width="0.56" height="0.9" fill="#948a8b"/>
<rect x="12.32" y="131.25" width="2.80" height="0.9" fill="#adda78"/>
<rect x="15.68" y="131.25" width="4.48" height="0.9" fill="#adda78"/>
<rect x="20.72" y="131.25" width="4.48" height="0.9" fill="#adda78"/>
<rect x="25.76" y="131.25" width="2.24" height="0.9" fill="#adda78"/>
<rect x="28.56" y="131.25" width="3.92" height="0.9" fill="#adda78"/>
<rect x="32.48" y="131.25" width="0.56" height="0.9" fill="#948a8b"/>
<rect x="33.04" y="131.25" width="0.56" height="0.9" fill="#948a8b"/>
<rect x="6.72" y="133.35" width="2.24" height="0.9" fill="#72696a"/>
<rect x="9.52" y="133.35" width="2.80" height="0.9" fill="#72696a"/>
<rect x="12.88" y="133.35" width="1.68" height="0.9" fill="#72696a"/>
<rect x="6.72" y="134.40" width="0.56" height="0.9" fill="#948a8b"/>
<rect x="7.28" y="134.40" width="1.68" height="0.9" fill="#fd6883"/>
<rect x="9.52" y="134.40" width="2.80" height="0.9" fill="#85dacc"/>
<rect x="12.32" y="134.40" width="0.56" height="0.9" fill="#948a8b"/>
<rect x="12.88" y="134.40" width="0.56" height="0.9" fill="#948a8b"/>
<rect x="13.44" y="134.40" width="5.04" height="0.9" fill="#adda78"/>
<rect x="19.04" y="134.40" width="7.28" height="0.9" fill="#adda78"/>
<rect x="26.88" y="134.40" width="2.24" height="0.9" fill="#adda78"/>
<rect x="29.68" y="134.40" width="3.92" height="0.9" fill="#adda78"/>
<rect x="34.16" y="134.40" width="4.48" height="0.9" fill="#adda78"/>
<rect x="38.64" y="134.40" width="0.56" height="0.9" fill="#948a8b"/>
<rect x="39.20" y="134.40" width="0.56" height="0.9" fill="#948a8b"/>
<rect x="7.84" y="135.45" width="1.68" height="0.9" fill="#d8cccd"/>
<rect x="10.08" y="135.45" width="14.00" height="0.9" fill="#d8cccd"/>
<rect x="6.72" y="136.50" width="1.12" height="0.9" fill="#948a8b"/>
<rect x="7.84" y="136.50" width="1.68" height="0.9" fill="#fd6883"/>
<rect x="9.52" y="136.50" width="0.56" height="0.9" fill="#948a8b"/>
<rect x="5.60" y="138.60" width="1.12" height="0.9" fill="#948a8b"/>
<rect x="6.72" y="138.60" width="1.68" height="0.9" fill="#fd6883"/>
<rect x="8.40" y="138.60" width="0.56" height="0.9" fill="#948a8b"/>
<rect x="4.48" y="139.65" width="1.12" height="0.9" fill="#948a8b"/>
<rect x="5.60" y="139.65" width="1.68" height="0.9" fill="#fd6883"/>
<rect x="7.28" y="139.65" width="0.56" height="0.9" fill="#948a8b"/>
<rect x="8.40" y="139.65" width="2.24" height="0.9" fill="#72696a"/>
<rect x="11.20" y="139.65" width="0.56" height="0.9" fill="#72696a"/>
<rect x="12.32" y="139.65" width="2.24" height="0.9" fill="#72696a"/>
<rect x="15.12" y="139.65" width="1.68" height="0.9" fill="#72696a"/>
<rect x="3.36" y="140.70" width="1.12" height="0.9" fill="#948a8b"/>
<rect x="4.48" y="140.70" width="1.68" height="0.9" fill="#fd6883"/>
<rect x="6.16" y="140.70" width="0.56" height="0.9" fill="#948a8b"/>
<rect x="7.28" y="140.70" width="2.24" height="0.9" fill="#72696a"/>
<rect x="10.08" y="140.70" width="0.56" height="0.9" fill="#72696a"/>
<rect x="11.20" y="140.70" width="5.60" height="0.9" fill="#72696a"/>
<rect x="17.36" y="140.70" width="1.68" height="0.9" fill="#72696a"/>
<rect x="2.24" y="141.75" width="1.12" height="0.9" fill="#948a8b"/>
<rect x="3.36" y="141.75" width="3.92" height="0.9" fill="#fd6883"/>
<rect x="7.28" y="141.75" width="0.56" height="0.9" fill="#948a8b"/>
<rect x="2.24" y="143.85" width="2.24" height="0.9" fill="#72696a"/>
<rect x="5.04" y="143.85" width="1.68" height="0.9" fill="#72696a"/>
<rect x="7.28" y="143.85" width="1.68" height="0.9" fill="#72696a"/>
<rect x="2.24" y="144.90" width="0.56" height="0.9" fill="#948a8b"/>
<rect x="2.80" y="144.90" width="3.92" height="0.9" fill="#fd6883"/>
<rect x="7.28" y="144.90" width="2.80" height="0.9" fill="#85dacc"/>
<rect x="10.08" y="144.90" width="0.56" height="0.9" fill="#948a8b"/>
<rect x="10.64" y="144.90" width="0.56" height="0.9" fill="#948a8b"/>
<rect x="11.20" y="144.90" width="2.24" height="0.9" fill="#adda78"/>
<rect x="14.00" y="144.90" width="4.48" height="0.9" fill="#adda78"/>
<rect x="19.04" y="144.90" width="3.92" height="0.9" fill="#adda78"/>
<rect x="22.96" y="144.90" width="0.56" height="0.9" fill="#948a8b"/>
<rect x="23.52" y="144.90" width="0.56" height="0.9" fill="#948a8b"/>
<rect x="3.36" y="145.95" width="1.68" height="0.9" fill="#d8cccd"/>
<rect x="5.60" y="145.95" width="7.84" height="0.9" fill="#d8cccd"/>
<rect x="2.24" y="147.00" width="1.12" height="0.9" fill="#948a8b"/>
<rect x="3.36" y="147.00" width="3.92" height="0.9" fill="#fd6883"/>
<rect x="7.28" y="147.00" width="0.56" height="0.9" fill="#948a8b"/>
<rect x="2.24" y="149.10" width="2.24" height="0.9" fill="#72696a"/>
<rect x="5.04" y="149.10" width="3.36" height="0.9" fill="#72696a"/>
<rect x="8.96" y="149.10" width="1.68" height="0.9" fill="#72696a"/>
<rect x="2.24" y="150.15" width="1.68" height="0.9" fill="#d8cccd"/>
<rect x="4.48" y="150.15" width="9.52" height="0.9" fill="#d8cccd"/>
<rect x="2.24" y="152.25" width="2.24" height="0.9" fill="#72696a"/>
<rect x="5.04" y="152.25" width="3.92" height="0.9" fill="#72696a"/>
<rect x="9.52" y="152.25" width="1.68" height="0.9" fill="#72696a"/>
<rect x="2.24" y="153.30" width="1.68" height="0.9" fill="#d8cccd"/>
<rect x="4.48" y="153.30" width="10.08" height="0.9" fill="#d8cccd"/>
<rect x="1.12" y="155.40" width="1.12" height="0.9" fill="#948a8b"/>
<rect x="2.24" y="155.40" width="2.24" height="0.9" fill="#fd6883"/>
<rect x="4.48" y="155.40" width="0.56" height="0.9" fill="#948a8b"/>
<rect x="0.00" y="156.45" width="1.12" height="0.9" fill="#948a8b"/>
<rect x="1.12" y="156.45" width="2.24" height="0.9" fill="#fd6883"/>
<rect x="3.36" y="156.45" width="0.56" height="0.9" fill="#948a8b"/>
</g></svg>
<div class="abs" style="left:1350px;top:79px;width:11px;height:72px;background:rgba(121,110,110,0.3)"></div>
<div class="abs" style="left:1288px;top:122px;width:62px;height:1.2px;background:#28496b"></div>
<div class="abs" style="left:1350px;top:177px;width:11px;height:1.5px;background:#c3b7b8"></div>

<!-- panel -->
<div class="ptab" style="left:275.4px"><span style="display:inline-block;vertical-align:top;white-space:nowrap;font-size:9.6px;transform:scaleX(0.8266);transform-origin:0 0">PROBLEMS</span></div>
<div class="ptab" style="left:338.9px"><span style="display:inline-block;vertical-align:top;white-space:nowrap;font-size:9.6px;transform:scaleX(0.8387);transform-origin:0 0">OUTPUT</span></div>
<div class="ptab" style="left:391.6px"><span style="display:inline-block;vertical-align:top;white-space:nowrap;font-size:9.6px;transform:scaleX(0.8179);transform-origin:0 0">DEBUG CONSOLE</span></div>
<div class="ptab" style="left:479.3px;color:#f9cc6c"><span style="display:inline-block;vertical-align:top;white-space:nowrap;font-size:9.6px;transform:scaleX(0.8529);transform-origin:0 0">TERMINAL</span></div>
<div class="abs" style="left:477.8px;top:539.5px;width:45px;height:1.5px;background:#f9cc6c"></div>
<div class="abs term" style="left:274.5px;top:549px"><span style="color:#adda78">&#10140;</span>  <span style="color:#85dacc">cbtd.tech</span> <span style="color:#f38d70">git:(</span><span style="color:#fd6883">main</span><span style="color:#f38d70">)</span></div>
<div class="abs" style="left:431px;top:550px;width:7.2px;height:12.6px;border:1px solid #c3b7b8"></div>
<svg class="abs" style="left:1210px;top:518px" width="150" height="20" viewBox="1210 518 150 20">
 <rect x="1215.2" y="522.6" width="10.4" height="10.8" rx="1" fill="none" stroke="#c3b7b8" stroke-width="1"/>
 <path d="M1219 525.5 L1221.6 528 L1219 530.5" fill="none" stroke="#c3b7b8" stroke-width="1"/>
 <path d="M1256.4 522.5 V533.5 M1251 528 H1261.8" stroke="#e6dadb" stroke-width="1.3"/>
 <path d="M1266.6 526.5 L1269.4 529.3 L1272.2 526.5" fill="none" stroke="#c3b7b8" stroke-width="1"/>
 <rect x="1283.2" y="522.7" width="9.6" height="10.6" rx="1" fill="none" stroke="#e6dadb" stroke-width="1.2"/>
 <path d="M1288 522.7 V533.3" stroke="#e6dadb" stroke-width="1.2"/>
 <path d="M1302.8 525 H1312.2 M1306 525 V523 H1309 V525 M1304 525 V533.3 H1311 V525 M1306.5 527 V531.5 M1308.5 527 V531.5" fill="none" stroke="#e6dadb" stroke-width="1"/>
 <path d="M1324.6 530.8 L1328.3 527 L1332 530.8" fill="none" stroke="#c3b7b8" stroke-width="1.1"/>
 <path d="M1342.2 523.6 L1349 530.4 M1349 523.6 L1342.2 530.4" fill="none" stroke="#c3b7b8" stroke-width="1.1"/>
</svg>
<div class="abs" style="left:1229.6px;top:521.6px;font-size:10px;color:#e6dadb">zsh</div>

<!-- status bar -->
<svg class="abs" style="left:0;top:755px" width="110" height="18" viewBox="0 755 110 18">
 <g fill="none" stroke="#948a8b" stroke-width="1">
  <circle cx="14.5" cy="759" r="1.5"/><circle cx="14.5" cy="767.2" r="1.5"/><circle cx="21" cy="761" r="1.5"/>
  <path d="M14.5 760.5 V765.7 M21 762.5 Q21 765 15.8 766"/>
  <path d="M39.5 766 H38.2 A2.6 2.6 0 0 1 38.4 760.8 A3.6 3.6 0 0 1 45 761.6 A2.2 2.2 0 0 1 45.2 766 H44 M41.6 768.5 V762.8 M39.6 764.6 L41.6 762.6 L43.6 764.6"/>
  <circle cx="65.2" cy="763.6" r="4.8"/><path d="M63.2 761.6 L67.2 765.6 M67.2 761.6 L63.2 765.6"/>
  <path d="M85.9 758.6 L90.6 767.8 H81.2 Z M85.9 762 V765 M85.9 766 V766.8"/>
 </g>
</svg>
<div class="stx" style="left:73px">0</div>
<div class="stx" style="left:93.6px">0</div>
<svg class="abs" style="left:990px;top:755px" width="12" height="18"><g fill="none" stroke="#948a8b" stroke-width="1"><circle cx="7" cy="8.6" r="2"/><path d="M7 2.5 V6.6 M7 10.6 V14.5"/></g></svg>
<div class="stx" style="left:1004.6px">You, 3 minutes ago</div>
<div class="stx" style="left:1097.6px">Ln 40, Col 15</div>
<div class="stx" style="left:1164.8px">Spaces: 2</div>
<div class="stx" style="left:1216.6px">UTF-8</div>
<div class="stx" style="left:1254.4px">LF</div>
<div class="stx" style="left:1276.8px">HTML</div>
<svg class="abs" style="left:1310px;top:755px" width="45" height="18" viewBox="1310 755 45 18">
 <g fill="none" stroke="#948a8b" stroke-width="0.9">
  <path d="M1317.6 759.2 H1324.8 V764 H1321.6"/>
  <circle cx="1318.3" cy="763.4" r="1.7"/>
  <path d="M1315.2 768.6 Q1315.6 765.6 1318.3 765.4 Q1321 765.6 1321.4 768.6"/>
  <path d="M1340.6 759.8 Q1340.4 766 1340 766.4 H1347.4 V764.2 M1342.4 767.6 H1344.6"/>
 </g>
 <circle cx="1346" cy="760.8" r="1.9" fill="#a39a9b"/>
</svg>

</body></html>
